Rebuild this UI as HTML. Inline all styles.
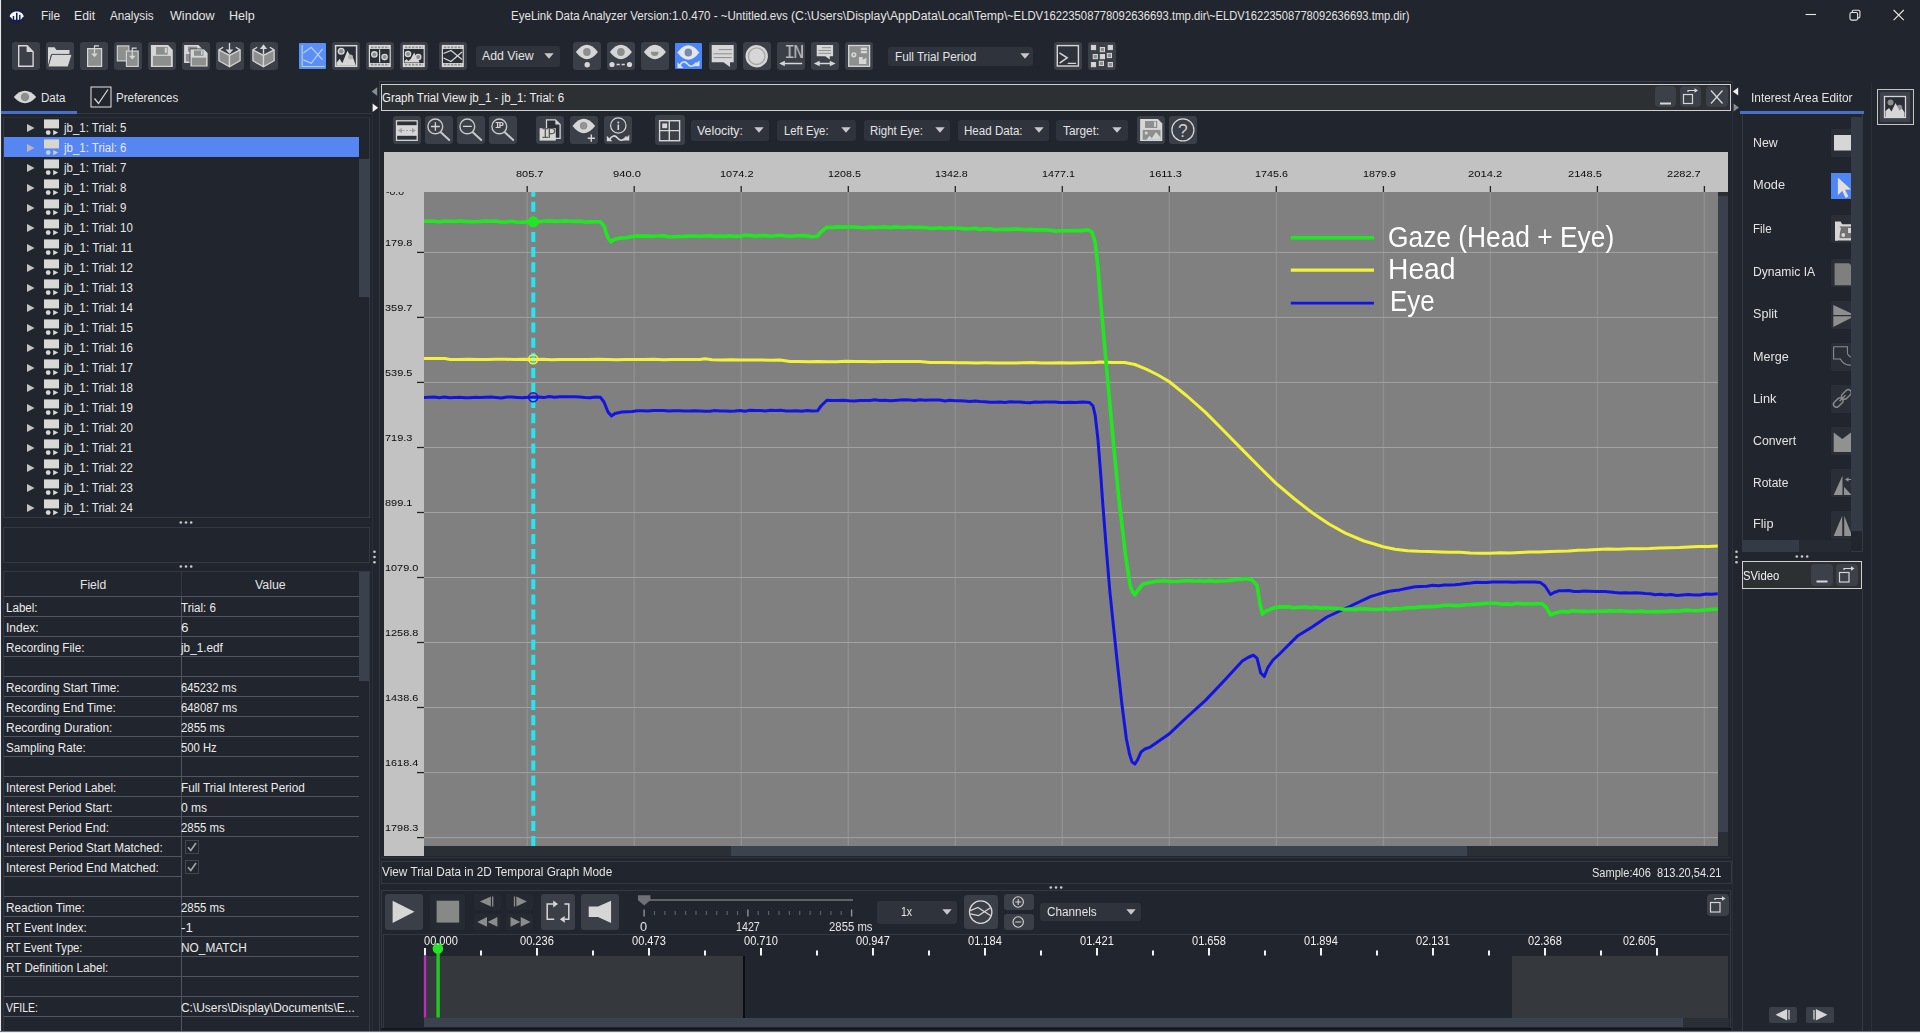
<!DOCTYPE html>
<html lang="en"><head><meta charset="utf-8"><title>EyeLink Data Analyzer</title>
<style>
html,body{margin:0;padding:0;}
body{width:1920px;height:1033px;overflow:hidden;background:#21252d;position:relative;font-family:"Liberation Sans",sans-serif;}
div{position:absolute;box-sizing:border-box;}
.t{position:absolute;white-space:nowrap;transform-origin:0 50%;display:block;}
svg{position:absolute;left:0;top:0;display:block;overflow:visible;}
.b svg{overflow:hidden;}
</style></head><body>
<div style="left:0px;top:0px;width:1px;height:1033px;background:#e4e6ea;"></div>
<div style="left:1px;top:0px;width:1px;height:1033px;background:#2c3039;"></div>
<svg style="left:8px;top:7.500px" width="17" height="16" viewBox="0 0 17 16"><ellipse cx="8.500" cy="8.200" rx="8" ry="7.400" fill="#161f52" opacity=".85"/><path d="M1.600 8.600C2.500 5 5.500 3.500 8.700 3.500S15 5 15.800 8.400L14.200 9.800L12.800 11.700H4.800L3.200 9.800Z" fill="#f6f7fb"/><rect x="8" y="4.800" width="1.500" height="7.200" fill="#101a4e"/><rect x="4.800" y="8" width="1.400" height="4" fill="#101a4e"/><rect x="11.100" y="6.800" width="1.400" height="5.200" fill="#101a4e"/></svg>
<span id="t1" class="t" style="left:40.65px;top:9.70px;font-size:12px;line-height:12px;color:#e4e4e4;transform:scaleX(0.9820);">File</span>
<span id="t2" class="t" style="left:74.43px;top:9.70px;font-size:12px;line-height:12px;color:#e4e4e4;transform:scaleX(1.0172);">Edit</span>
<span id="t3" class="t" style="left:110.46px;top:9.70px;font-size:12px;line-height:12px;color:#e4e4e4;transform:scaleX(0.9754);">Analysis</span>
<span id="t4" class="t" style="left:169.61px;top:9.70px;font-size:12px;line-height:12px;color:#e4e4e4;transform:scaleX(1.0467);">Window</span>
<span id="t5" class="t" style="left:229.41px;top:9.70px;font-size:12px;line-height:12px;color:#e4e4e4;transform:scaleX(1.0442);">Help</span>
<span id="t6" class="t" style="left:511.37px;top:10.30px;font-size:12px;line-height:12px;color:#e4e4e4;transform:scaleX(0.9615);">EyeLink Data Analyzer Version:1.0.470 - ~Untitled.evs</span>
<span id="t7" class="t" style="left:790.52px;top:10.30px;font-size:12px;line-height:12px;color:#e4e4e4;transform:scaleX(1.0233);">(C:\Users\Display\AppData\Local\Temp\</span>
<span id="t8" class="t" style="left:1006.88px;top:10.30px;font-size:12px;line-height:12px;color:#e4e4e4;transform:scaleX(0.9422);">~ELDV16223508778092636693.tmp.dir\</span>
<span id="t9" class="t" style="left:1209.39px;top:10.30px;font-size:12px;line-height:12px;color:#e4e4e4;transform:scaleX(0.9286);">~ELDV16223508778092636693.tmp.dir)</span>
<svg style="left:1800px;top:5px" width="110" height="20" viewBox="1800 5 110 20" fill="none" stroke="#e6e6e6" stroke-width="1.1"><path d="M1805.5 14.5H1816"/><rect x="1850" y="12.5" width="7.6" height="7.6" rx="1.5"/><path d="M1852.3 12.3V11.6a1.3 1.3 0 0 1 1.3-1.3h5a1.3 1.3 0 0 1 1.3 1.3v5a1.3 1.3 0 0 1-1.3 1.3h-0.8"/><path d="M1893.6 10l10.2 10.2M1903.8 10l-10.2 10.2"/></svg>
<div class="b" style="left:12px;top:42px;width:28px;height:28px;background:#3a3f48;border-radius:3px;overflow:hidden;"><svg width="28" height="28" viewBox="0 0 28 28"><path d="M6.700 3.800h8.500l5.900 6v14.500H6.700z" fill="#3a3f48" stroke="#d6d6d6" stroke-width="1.400"/><path d="M14.600 3.800v6.200h6.500z" fill="#d6d6d6"/></svg></div>
<div class="b" style="left:46px;top:42px;width:28px;height:28px;background:#3a3f48;border-radius:3px;overflow:hidden;"><svg width="28" height="28" viewBox="0 0 28 28"><path d="M2 5.300h6.500l2 2.700h13v4.500H5L2 24.900z" fill="#d6d6d6"/><path d="M5.700 12.400h20.300l-3.900 12.500H2z" fill="#d6d6d6" stroke="#3a3f48" stroke-width=".9"/></svg></div>
<div class="b" style="left:80px;top:42px;width:28px;height:28px;background:#3a3f48;border-radius:3px;overflow:hidden;"><svg width="28" height="28" viewBox="0 0 28 28"><rect x="7.600" y="6.600" width="14" height="17.800" fill="#8c8f8e" stroke="#d6d6d6" stroke-width="1.200"/><path d="M14.500 11.500V3.800h4.500" stroke="#d6d6d6" stroke-width="1.200" fill="none"/><path d="M11.300 11.400h6.400l-3.200 3.800z" fill="#d6d6d6"/></svg></div>
<div class="b" style="left:114px;top:42px;width:28px;height:28px;background:#3a3f48;border-radius:3px;overflow:hidden;"><svg width="28" height="28" viewBox="0 0 28 28"><rect x="3.300" y="3.900" width="11.600" height="15" fill="#8c8f8e" stroke="#d6d6d6" stroke-width="1.100"/><rect x="12.400" y="9" width="11.800" height="15.400" fill="#8c8f8e" stroke="#d6d6d6" stroke-width="1.100"/><path d="M18.300 14V6.200h4.400" stroke="#d6d6d6" stroke-width="1.200" fill="none"/><path d="M15 13.800h6.600l-3.300 3.700z" fill="#d6d6d6"/></svg></div>
<div class="b" style="left:148px;top:42px;width:28px;height:28px;background:#3a3f48;border-radius:3px;overflow:hidden;"><svg width="28" height="28" viewBox="0 0 28 28"><path d="M2.900 3h17.200l4.700 5v16.900H2.900z" fill="#d6d6d6"/><rect x="8" y="4.900" width="11.700" height="7.800" fill="#8c8f8e"/><rect x="16.800" y="5.700" width="2" height="5.100" fill="#d6d6d6"/><rect x="4.900" y="13.900" width="18" height="9.900" fill="#8c8f8e"/></svg></div>
<div class="b" style="left:182px;top:42px;width:28px;height:28px;background:#3a3f48;border-radius:3px;overflow:hidden;"><svg width="28" height="28" viewBox="0 0 28 28"><path d="M2.100 3h14.400l4 4.200V21H2.100z" fill="#d6d6d6"/><rect x="6" y="4.600" width="9" height="5" fill="#8c8f8e"/><rect x="3.800" y="12" width="6" height="7.500" fill="#8c8f8e"/><path d="M8 6.900h14l4 4.200v13.800H8z" fill="#d6d6d6" stroke="#3a3f48" stroke-width=".8"/><rect x="12" y="8.500" width="9.500" height="5.300" fill="#8c8f8e"/><rect x="19" y="9.100" width="1.500" height="3.600" fill="#d6d6d6"/><rect x="9.800" y="15.600" width="14.300" height="7.900" fill="#8c8f8e"/></svg></div>
<div class="b" style="left:216px;top:42px;width:28px;height:28px;background:#3a3f48;border-radius:3px;overflow:hidden;"><svg width="28" height="28" viewBox="0 0 28 28"><path d="M2.900 7.900L13.500 13.300v11.400L2.900 18.800z" fill="#8c8f8e" stroke="#d6d6d6" stroke-width="1.300" stroke-linejoin="round"/><path d="M24.100 7.900L13.500 13.300v11.400l10.600-5.900z" fill="#8c8f8e" stroke="#d6d6d6" stroke-width="1.300" stroke-linejoin="round"/><path d="M2.900 7.900l4.300-2.700M24.100 7.900l-4.300-2.700" stroke="#d6d6d6" stroke-width="1.300"/><path d="M13.500 1v8" stroke="#d6d6d6" stroke-width="1.300"/><path d="M9.700 7.500h7.600l-3.800 4.600z" fill="#d6d6d6"/></svg></div>
<div class="b" style="left:250px;top:42px;width:28px;height:28px;background:#3a3f48;border-radius:3px;overflow:hidden;"><svg width="28" height="28" viewBox="0 0 28 28"><path d="M2.900 7.900L13.500 13.300v11.400L2.900 18.800z" fill="#8c8f8e" stroke="#d6d6d6" stroke-width="1.300" stroke-linejoin="round"/><path d="M24.100 7.900L13.500 13.300v11.400l10.600-5.900z" fill="#8c8f8e" stroke="#d6d6d6" stroke-width="1.300" stroke-linejoin="round"/><path d="M2.900 7.900l4.300-2.700M24.100 7.900l-4.300-2.700" stroke="#d6d6d6" stroke-width="1.300"/><path d="M13.500 5.500v7" stroke="#d6d6d6" stroke-width="1.400"/><path d="M9.900 7h7.200l-3.600-4.800z" fill="#d6d6d6"/></svg></div>
<div class="b" style="left:298.5px;top:42.6px;width:27px;height:26.4px;background:#5a8ff8;border-radius:1px;overflow:hidden;"><svg width="27" height="26.4" viewBox="0 0 27 26.4"><path d="M3.200 2v21.500h22.500" fill="none" stroke="#b4ceff" stroke-width="1.200"/><path d="M4.400 10.100L12.200 4.300L23.500 16.800" fill="none" stroke="#b4ceff" stroke-width="1.300"/><path d="M4.400 16.800L12.200 20.300L23.500 5.900" fill="none" stroke="#b4ceff" stroke-width="1.300"/></svg></div>
<div class="b" style="left:332px;top:42px;width:28px;height:28px;background:#3a3f48;border-radius:3px;overflow:hidden;"><svg width="28" height="28" viewBox="0 0 28 28"><rect x="3.600" y="3.700" width="21" height="20.600" fill="#2a2e36" stroke="#d6d6d6" stroke-width="1.500"/><circle cx="9.200" cy="9.200" r="3.500" fill="#d6d6d6"/><circle cx="9.200" cy="9.200" r="2.200" fill="#8c8f8e"/><path d="M4.500 23.800v-3l3.200-4 2.600 4.500 5.100-12.500 3.500 6 2 .5 3 8.500z" fill="#d6d6d6"/><circle cx="18.500" cy="15.100" r="2.500" fill="#b0b2b1"/></svg></div>
<div class="b" style="left:366px;top:42px;width:28px;height:28px;background:#3a3f48;border-radius:3px;overflow:hidden;"><svg width="28" height="28" viewBox="0 0 28 28"><rect x="3.400" y="3.500" width="20.800" height="21" fill="#2a2e36" stroke="#d6d6d6" stroke-width="1.200"/><path d="M3.400 5.400h20.800M3.400 22.600h20.800" stroke="#d6d6d6" stroke-width="3.400"/><path d="M5 5.400h18M5 22.600h18" stroke="#8c8f8e" stroke-width="1.800" stroke-dasharray="2.300 1.200"/><path d="M13.600 7.500v13" stroke="#d6d6d6" stroke-width="1.200"/><circle cx="8.400" cy="12.400" r="3.300" fill="#d6d6d6"/><circle cx="8.400" cy="12.400" r="2" fill="#8c8f8e"/><circle cx="18.600" cy="15.100" r="3.300" fill="#d6d6d6"/><circle cx="18.600" cy="15.100" r="2" fill="#8c8f8e"/></svg></div>
<div class="b" style="left:400px;top:42px;width:28px;height:28px;background:#3a3f48;border-radius:3px;overflow:hidden;"><svg width="28" height="28" viewBox="0 0 28 28"><rect x="3.400" y="3.500" width="20.800" height="21" fill="#2a2e36" stroke="#d6d6d6" stroke-width="1.200"/><path d="M3.400 5.400h20.800M3.400 22.600h20.800" stroke="#d6d6d6" stroke-width="3.400"/><path d="M5 5.400h18M5 22.600h18" stroke="#8c8f8e" stroke-width="1.800" stroke-dasharray="2.300 1.200"/><circle cx="8" cy="12" r="3.300" fill="#d6d6d6"/><circle cx="8" cy="12" r="2" fill="#8c8f8e"/><path d="M4.500 20.400v-1.500l2-2 1.800 2 2.400-2 3.500-6.500 2.300 6 2 1.500 1 2.500z" fill="#d6d6d6"/><circle cx="18.200" cy="15.100" r="3.300" fill="#d6d6d6"/><circle cx="18.200" cy="15.100" r="2" fill="#8c8f8e"/></svg></div>
<div class="b" style="left:438.5px;top:42px;width:28px;height:28px;background:#3a3f48;border-radius:3px;overflow:hidden;"><svg width="28" height="28" viewBox="0 0 28 28"><rect x="3.400" y="3.500" width="20.800" height="21" fill="#2a2e36" stroke="#d6d6d6" stroke-width="1.200"/><path d="M3.400 5.400h20.800M3.400 22.600h20.800" stroke="#d6d6d6" stroke-width="3.400"/><path d="M5 5.400h18M5 22.600h18" stroke="#8c8f8e" stroke-width="1.800" stroke-dasharray="2.300 1.200"/><path d="M4.500 11.500L12 8.500L23 17.500M4.500 16L12 19.500L23 10" fill="none" stroke="#d6d6d6" stroke-width="1.200"/></svg></div>
<div style="left:476px;top:45.5px;width:84px;height:21px;background:#2e333c;border-radius:3px;"></div>
<svg style="left:543.5px;top:53.0px" width="10" height="6" viewBox="0 0 10 6"><path d="M0.3 0.3h9.4L5 5.8z" fill="#c8c8c8"/></svg>
<span id="t10" class="t" style="left:482.32px;top:50.40px;font-size:12px;line-height:12px;color:#e4e4e4;transform:scaleX(1.0231);">Add View</span>
<div class="b" style="left:573px;top:42px;width:28px;height:28px;background:#3a3f48;border-radius:3px;overflow:hidden;"><svg width="28" height="28" viewBox="0 0 28 28"><path d="M2.9000000000000004 10Q13.9 -4.5 24.9 10Q13.9 24.5 2.9000000000000004 10z" fill="#d6d6d6"/><ellipse cx="13.9" cy="10" rx="3.800" ry="4" fill="#8c8f8e"/><circle cx="14.200" cy="22.800" r="2.700" fill="#d6d6d6"/></svg></div>
<div class="b" style="left:607px;top:42px;width:28px;height:28px;background:#3a3f48;border-radius:3px;overflow:hidden;"><svg width="28" height="28" viewBox="0 0 28 28"><path d="M2.9000000000000004 10Q13.9 -4.5 24.9 10Q13.9 24.5 2.9000000000000004 10z" fill="#d6d6d6"/><ellipse cx="13.9" cy="10" rx="3.800" ry="4" fill="#8c8f8e"/><circle cx="5" cy="22.500" r="2.600" fill="#d6d6d6"/><circle cx="22.500" cy="22.500" r="2.600" fill="#d6d6d6"/><path d="M9.600 22.500h3.200M14.600 22.500h3.200" stroke="#d6d6d6" stroke-width="1.600"/></svg></div>
<div class="b" style="left:641px;top:42px;width:28px;height:28px;background:#3a3f48;border-radius:3px;overflow:hidden;"><svg width="28" height="28" viewBox="0 0 28 28"><path d="M2.900 10Q13.900 -4.500 24.900 10Q13.900 24.500 2.900 10z" fill="#d6d6d6"/><path d="M9.900 9.700h7.600a3.800 4.300 0 0 1-7.600 0z" fill="#8c8f8e"/></svg></div>
<div class="b" style="left:675.2px;top:42.6px;width:27.3px;height:26.6px;background:#4c86f6;border-radius:1px;overflow:hidden;"><svg width="27.3" height="26.6" viewBox="0 0 27.3 26.6"><path d="M2.3000000000000007 9.4Q13.3 -5.1 24.3 9.4Q13.3 23.9 2.3000000000000007 9.4z" fill="#dfe6f4"/><ellipse cx="13.3" cy="9.4" rx="3.800" ry="4" fill="#7f8aa2"/><path d="M4.500 23c2.500-5 5.500-5 8-2s5.500 3.500 9-1.500" fill="none" stroke="#d4e2ff" stroke-width="1.700"/><path d="M2.500 19.200v5.800h6z" fill="#d4e2ff"/><path d="M24.500 17.300v6h-6z" fill="#d4e2ff"/></svg></div>
<div class="b" style="left:709px;top:42px;width:28px;height:28px;background:#3a3f48;border-radius:3px;overflow:hidden;"><svg width="28" height="28" viewBox="0 0 28 28"><path d="M2.700 2.900h22v17.300h-3.700v4.700l-6.600-4.700H2.700z" fill="#d6d6d6"/><path d="M9.700 7.600h13.200M4.600 11.800h18.300M4.600 15.600h18.300" stroke="#8c8f8e" stroke-width="1"/></svg></div>
<div class="b" style="left:743px;top:42px;width:28px;height:28px;background:#3a3f48;border-radius:3px;overflow:hidden;"><svg width="28" height="28" viewBox="0 0 28 28"><circle cx="13.700" cy="14.200" r="11.200" fill="#d6d6d6"/><circle cx="13.700" cy="14.200" r="8.300" fill="none" stroke="#a4a6a5" stroke-width="1.300"/></svg></div>
<div class="b" style="left:777px;top:42px;width:28px;height:28px;background:#3a3f48;border-radius:3px;overflow:hidden;"><svg width="28" height="28" viewBox="0 0 28 28"><path d="M4.600 21.500h20.600" stroke="#d6d6d6" stroke-width="1.300"/><path d="M2.200 21.500l5.600-2.700v5.400z" fill="#d6d6d6"/></svg></div>
<div class="b" style="left:811px;top:42px;width:28px;height:28px;background:#3a3f48;border-radius:3px;overflow:hidden;"><svg width="28" height="28" viewBox="0 0 28 28"><path d="M5.700 2.900h16.400v11.300h-3.300v3.200l-4.600-3.200H5.700z" fill="#d6d6d6"/><path d="M11 5.700h9M7.500 8.500h12.500M7.500 11.300h12.500" stroke="#8c8f8e" stroke-width="1"/><path d="M6 21.500h15.500" stroke="#d6d6d6" stroke-width="1.400"/><path d="M2.900 21.500l5.800-2.800v5.600z" fill="#d6d6d6"/><path d="M24.600 21.500l-5.800-2.800v5.600z" fill="#d6d6d6"/></svg></div>
<div class="b" style="left:845px;top:42px;width:28px;height:28px;background:#3a3f48;border-radius:3px;overflow:hidden;"><svg width="28" height="28" viewBox="0 0 28 28"><rect x="3.700" y="3.500" width="20.900" height="20.800" fill="#8c8f8e" stroke="#d6d6d6" stroke-width="1.300"/><circle cx="8.800" cy="12.800" r="2.600" fill="#d6d6d6"/><circle cx="8.800" cy="12.800" r="1" fill="#8c8f8e"/><rect x="15.800" y="5.700" width="6.100" height="5.600" fill="#d6d6d6"/><path d="M15.800 8.500h6.100" stroke="#8c8f8e" stroke-width=".8"/><path d="M13.900 15.100h3.800v2.600l3.700-2v6.400h-7.500z" fill="#d6d6d6"/></svg></div>
<span class="t" style="left:784px;top:41.500px;font-size:21px;line-height:21px;color:#b9babb;font-family:'Liberation Mono',monospace;letter-spacing:-2.600px;transform:scaleX(0.9);will-change:transform">IN</span>
<div style="left:888px;top:46.5px;width:145px;height:19px;background:#2e333c;border-radius:3px;"></div>
<svg style="left:1020px;top:53.0px" width="10" height="6" viewBox="0 0 10 6"><path d="M0.3 0.3h9.4L5 5.8z" fill="#c8c8c8"/></svg>
<span id="t11" class="t" style="left:894.66px;top:50.80px;font-size:12px;line-height:12px;color:#e4e4e4;transform:scaleX(0.9750);">Full Trial Period</span>
<div class="b" style="left:1054px;top:42px;width:28px;height:28px;background:#3a3f48;border-radius:3px;overflow:hidden;"><svg width="28" height="28" viewBox="0 0 28 28"><rect x="3.300" y="3.600" width="21.100" height="20.400" fill="#2e323a" stroke="#d6d6d6" stroke-width="1.400"/><path d="M5.400 10.900l7.800 4.900-7.600 5.400" fill="none" stroke="#d6d6d6" stroke-width="1.500"/><path d="M13.700 21.400h8.400" stroke="#d6d6d6" stroke-width="1.300"/></svg></div>
<div class="b" style="left:1088px;top:42px;width:28px;height:28px;background:#3a3f48;border-radius:3px;overflow:hidden;"><svg width="28" height="28" viewBox="0 0 28 28"><rect x="3.4" y="3.4" width="4.200" height="4.200" fill="#d6d6d6" stroke="#d6d6d6" stroke-width="1"/><rect x="12.3" y="5.5" width="4.200" height="4.200" fill="#8c8f8e" stroke="#d6d6d6" stroke-width="1"/><rect x="20.2" y="3.4" width="4.200" height="4.200" fill="#d6d6d6" stroke="#d6d6d6" stroke-width="1"/><rect x="5.2" y="12.5" width="4.200" height="4.200" fill="#8c8f8e" stroke="#d6d6d6" stroke-width="1"/><rect x="12.3" y="12.5" width="4.200" height="4.200" fill="#d6d6d6" stroke="#d6d6d6" stroke-width="1"/><rect x="19.3" y="11.4" width="4.200" height="4.200" fill="#8c8f8e" stroke="#d6d6d6" stroke-width="1"/><rect x="3.4" y="20.5" width="4.200" height="4.200" fill="#d6d6d6" stroke="#d6d6d6" stroke-width="1"/><rect x="11.3" y="19.3" width="4.200" height="4.200" fill="#8c8f8e" stroke="#d6d6d6" stroke-width="1"/><rect x="20.2" y="20.5" width="4.200" height="4.200" fill="#8c8f8e" stroke="#d6d6d6" stroke-width="1"/></svg></div>
<svg style="left:13px;top:89px" width="24" height="16" viewBox="0 0 24 16"><path d="M0.800 8Q12 -4.500 23.200 8Q12 20.500 0.800 8z" fill="#d6d6d6"/><circle cx="12" cy="8" r="4.200" fill="#8c8f8e"/></svg>
<span id="t12" class="t" style="left:40.56px;top:92.20px;font-size:12px;line-height:12px;color:#e4e4e4;transform:scaleX(0.9651);">Data</span>
<svg style="left:90px;top:86px" width="22" height="22" viewBox="0 0 22 22"><rect x="1" y="1" width="20" height="20" fill="none" stroke="#d6d6d6" stroke-width="1.100"/><path d="M4.500 12.500l4 5L18 3.500" fill="none" stroke="#d6d6d6" stroke-width="1.300"/></svg>
<span id="t13" class="t" style="left:116.27px;top:92.20px;font-size:12px;line-height:12px;color:#e4e4e4;transform:scaleX(0.9608);">Preferences</span>
<div style="left:77px;top:113px;width:295px;height:1px;background:#343941;"></div>
<div style="left:1px;top:111px;width:76px;height:3px;background:#4a6fc6;"></div>
<svg style="left:371px;top:86px" width="8" height="27" viewBox="371 86 8 27"><path d="M377.200 87.300v8.400l-5.600-4.200z" fill="#8a8d90"/><path d="M372.600 103.500v8.400l5.600-4.200z" fill="#f0f0f0"/></svg>
<div style="left:3px;top:117px;width:367px;height:401px;border:1px solid #343941;border-top-color:#2b3038;"></div>
<div style="left:4px;top:137px;width:355px;height:20px;background:#5586f2;"></div>
<div style="left:359px;top:159px;width:10.5px;height:138px;background:#3b404d;"></div>
<svg style="left:0;top:117px" width="70" height="20" viewBox="0 117 70 20"><path d="M0 0.500l7.500 4L0 8.500z" transform="translate(27 123.500)" fill="#c4c4c4"/><rect x="44" y="119.400" width="15" height="9" fill="#d8d8d4"/><circle cx="48.200" cy="132.600" r="2.400" fill="#d8d8d4"/><path d="M53.200 130l5 2.600-5 2.600z" fill="#d8d8d4"/></svg>
<span id="t14" class="t" style="left:63.77px;top:121.50px;font-size:12px;line-height:12px;color:#e8e8e8;transform:scaleX(0.9554);">jb_1: Trial: 5</span>
<svg style="left:0;top:137px" width="70" height="20" viewBox="0 117 70 20"><path d="M0 0.500l7.500 4L0 8.500z" transform="translate(27 123.500)" fill="#bfb3b6"/><rect x="44" y="119.400" width="15" height="9" fill="#d9d6cc"/><circle cx="48.200" cy="132.600" r="2.400" fill="#b9cff7"/><path d="M53.200 130l5 2.600-5 2.600z" fill="#b9cff7"/></svg>
<span id="t15" class="t" style="left:63.77px;top:141.50px;font-size:12px;line-height:12px;color:#e8e8e8;transform:scaleX(0.9554);">jb_1: Trial: 6</span>
<svg style="left:0;top:157px" width="70" height="20" viewBox="0 117 70 20"><path d="M0 0.500l7.500 4L0 8.500z" transform="translate(27 123.500)" fill="#c4c4c4"/><rect x="44" y="119.400" width="15" height="9" fill="#d8d8d4"/><circle cx="48.200" cy="132.600" r="2.400" fill="#d8d8d4"/><path d="M53.200 130l5 2.600-5 2.600z" fill="#d8d8d4"/></svg>
<span id="t16" class="t" style="left:63.77px;top:161.50px;font-size:12px;line-height:12px;color:#e8e8e8;transform:scaleX(0.9554);">jb_1: Trial: 7</span>
<svg style="left:0;top:177px" width="70" height="20" viewBox="0 117 70 20"><path d="M0 0.500l7.500 4L0 8.500z" transform="translate(27 123.500)" fill="#c4c4c4"/><rect x="44" y="119.400" width="15" height="9" fill="#d8d8d4"/><circle cx="48.200" cy="132.600" r="2.400" fill="#d8d8d4"/><path d="M53.200 130l5 2.600-5 2.600z" fill="#d8d8d4"/></svg>
<span id="t17" class="t" style="left:63.77px;top:181.50px;font-size:12px;line-height:12px;color:#e8e8e8;transform:scaleX(0.9554);">jb_1: Trial: 8</span>
<svg style="left:0;top:197px" width="70" height="20" viewBox="0 117 70 20"><path d="M0 0.500l7.500 4L0 8.500z" transform="translate(27 123.500)" fill="#c4c4c4"/><rect x="44" y="119.400" width="15" height="9" fill="#d8d8d4"/><circle cx="48.200" cy="132.600" r="2.400" fill="#d8d8d4"/><path d="M53.200 130l5 2.600-5 2.600z" fill="#d8d8d4"/></svg>
<span id="t18" class="t" style="left:63.77px;top:201.50px;font-size:12px;line-height:12px;color:#e8e8e8;transform:scaleX(0.9554);">jb_1: Trial: 9</span>
<svg style="left:0;top:217px" width="70" height="20" viewBox="0 117 70 20"><path d="M0 0.500l7.500 4L0 8.500z" transform="translate(27 123.500)" fill="#c4c4c4"/><rect x="44" y="119.400" width="15" height="9" fill="#d8d8d4"/><circle cx="48.200" cy="132.600" r="2.400" fill="#d8d8d4"/><path d="M53.200 130l5 2.600-5 2.600z" fill="#d8d8d4"/></svg>
<span id="t19" class="t" style="left:63.77px;top:221.50px;font-size:12px;line-height:12px;color:#e8e8e8;transform:scaleX(0.9558);">jb_1: Trial: 10</span>
<svg style="left:0;top:237px" width="70" height="20" viewBox="0 117 70 20"><path d="M0 0.500l7.500 4L0 8.500z" transform="translate(27 123.500)" fill="#c4c4c4"/><rect x="44" y="119.400" width="15" height="9" fill="#d8d8d4"/><circle cx="48.200" cy="132.600" r="2.400" fill="#d8d8d4"/><path d="M53.200 130l5 2.600-5 2.600z" fill="#d8d8d4"/></svg>
<span id="t20" class="t" style="left:63.76px;top:241.50px;font-size:12px;line-height:12px;color:#e8e8e8;transform:scaleX(0.9680);">jb_1: Trial: 11</span>
<svg style="left:0;top:257px" width="70" height="20" viewBox="0 117 70 20"><path d="M0 0.500l7.500 4L0 8.500z" transform="translate(27 123.500)" fill="#c4c4c4"/><rect x="44" y="119.400" width="15" height="9" fill="#d8d8d4"/><circle cx="48.200" cy="132.600" r="2.400" fill="#d8d8d4"/><path d="M53.200 130l5 2.600-5 2.600z" fill="#d8d8d4"/></svg>
<span id="t21" class="t" style="left:63.77px;top:261.50px;font-size:12px;line-height:12px;color:#e8e8e8;transform:scaleX(0.9558);">jb_1: Trial: 12</span>
<svg style="left:0;top:277px" width="70" height="20" viewBox="0 117 70 20"><path d="M0 0.500l7.500 4L0 8.500z" transform="translate(27 123.500)" fill="#c4c4c4"/><rect x="44" y="119.400" width="15" height="9" fill="#d8d8d4"/><circle cx="48.200" cy="132.600" r="2.400" fill="#d8d8d4"/><path d="M53.200 130l5 2.600-5 2.600z" fill="#d8d8d4"/></svg>
<span id="t22" class="t" style="left:63.77px;top:281.50px;font-size:12px;line-height:12px;color:#e8e8e8;transform:scaleX(0.9558);">jb_1: Trial: 13</span>
<svg style="left:0;top:297px" width="70" height="20" viewBox="0 117 70 20"><path d="M0 0.500l7.500 4L0 8.500z" transform="translate(27 123.500)" fill="#c4c4c4"/><rect x="44" y="119.400" width="15" height="9" fill="#d8d8d4"/><circle cx="48.200" cy="132.600" r="2.400" fill="#d8d8d4"/><path d="M53.200 130l5 2.600-5 2.600z" fill="#d8d8d4"/></svg>
<span id="t23" class="t" style="left:63.77px;top:301.50px;font-size:12px;line-height:12px;color:#e8e8e8;transform:scaleX(0.9558);">jb_1: Trial: 14</span>
<svg style="left:0;top:317px" width="70" height="20" viewBox="0 117 70 20"><path d="M0 0.500l7.500 4L0 8.500z" transform="translate(27 123.500)" fill="#c4c4c4"/><rect x="44" y="119.400" width="15" height="9" fill="#d8d8d4"/><circle cx="48.200" cy="132.600" r="2.400" fill="#d8d8d4"/><path d="M53.200 130l5 2.600-5 2.600z" fill="#d8d8d4"/></svg>
<span id="t24" class="t" style="left:63.77px;top:321.50px;font-size:12px;line-height:12px;color:#e8e8e8;transform:scaleX(0.9558);">jb_1: Trial: 15</span>
<svg style="left:0;top:337px" width="70" height="20" viewBox="0 117 70 20"><path d="M0 0.500l7.500 4L0 8.500z" transform="translate(27 123.500)" fill="#c4c4c4"/><rect x="44" y="119.400" width="15" height="9" fill="#d8d8d4"/><circle cx="48.200" cy="132.600" r="2.400" fill="#d8d8d4"/><path d="M53.200 130l5 2.600-5 2.600z" fill="#d8d8d4"/></svg>
<span id="t25" class="t" style="left:63.77px;top:341.50px;font-size:12px;line-height:12px;color:#e8e8e8;transform:scaleX(0.9558);">jb_1: Trial: 16</span>
<svg style="left:0;top:357px" width="70" height="20" viewBox="0 117 70 20"><path d="M0 0.500l7.500 4L0 8.500z" transform="translate(27 123.500)" fill="#c4c4c4"/><rect x="44" y="119.400" width="15" height="9" fill="#d8d8d4"/><circle cx="48.200" cy="132.600" r="2.400" fill="#d8d8d4"/><path d="M53.200 130l5 2.600-5 2.600z" fill="#d8d8d4"/></svg>
<span id="t26" class="t" style="left:63.77px;top:361.50px;font-size:12px;line-height:12px;color:#e8e8e8;transform:scaleX(0.9558);">jb_1: Trial: 17</span>
<svg style="left:0;top:377px" width="70" height="20" viewBox="0 117 70 20"><path d="M0 0.500l7.500 4L0 8.500z" transform="translate(27 123.500)" fill="#c4c4c4"/><rect x="44" y="119.400" width="15" height="9" fill="#d8d8d4"/><circle cx="48.200" cy="132.600" r="2.400" fill="#d8d8d4"/><path d="M53.200 130l5 2.600-5 2.600z" fill="#d8d8d4"/></svg>
<span id="t27" class="t" style="left:63.77px;top:381.50px;font-size:12px;line-height:12px;color:#e8e8e8;transform:scaleX(0.9558);">jb_1: Trial: 18</span>
<svg style="left:0;top:397px" width="70" height="20" viewBox="0 117 70 20"><path d="M0 0.500l7.500 4L0 8.500z" transform="translate(27 123.500)" fill="#c4c4c4"/><rect x="44" y="119.400" width="15" height="9" fill="#d8d8d4"/><circle cx="48.200" cy="132.600" r="2.400" fill="#d8d8d4"/><path d="M53.200 130l5 2.600-5 2.600z" fill="#d8d8d4"/></svg>
<span id="t28" class="t" style="left:63.77px;top:401.50px;font-size:12px;line-height:12px;color:#e8e8e8;transform:scaleX(0.9558);">jb_1: Trial: 19</span>
<svg style="left:0;top:417px" width="70" height="20" viewBox="0 117 70 20"><path d="M0 0.500l7.500 4L0 8.500z" transform="translate(27 123.500)" fill="#c4c4c4"/><rect x="44" y="119.400" width="15" height="9" fill="#d8d8d4"/><circle cx="48.200" cy="132.600" r="2.400" fill="#d8d8d4"/><path d="M53.200 130l5 2.600-5 2.600z" fill="#d8d8d4"/></svg>
<span id="t29" class="t" style="left:63.77px;top:421.50px;font-size:12px;line-height:12px;color:#e8e8e8;transform:scaleX(0.9558);">jb_1: Trial: 20</span>
<svg style="left:0;top:437px" width="70" height="20" viewBox="0 117 70 20"><path d="M0 0.500l7.500 4L0 8.500z" transform="translate(27 123.500)" fill="#c4c4c4"/><rect x="44" y="119.400" width="15" height="9" fill="#d8d8d4"/><circle cx="48.200" cy="132.600" r="2.400" fill="#d8d8d4"/><path d="M53.200 130l5 2.600-5 2.600z" fill="#d8d8d4"/></svg>
<span id="t30" class="t" style="left:63.77px;top:441.50px;font-size:12px;line-height:12px;color:#e8e8e8;transform:scaleX(0.9558);">jb_1: Trial: 21</span>
<svg style="left:0;top:457px" width="70" height="20" viewBox="0 117 70 20"><path d="M0 0.500l7.500 4L0 8.500z" transform="translate(27 123.500)" fill="#c4c4c4"/><rect x="44" y="119.400" width="15" height="9" fill="#d8d8d4"/><circle cx="48.200" cy="132.600" r="2.400" fill="#d8d8d4"/><path d="M53.200 130l5 2.600-5 2.600z" fill="#d8d8d4"/></svg>
<span id="t31" class="t" style="left:63.77px;top:461.50px;font-size:12px;line-height:12px;color:#e8e8e8;transform:scaleX(0.9558);">jb_1: Trial: 22</span>
<svg style="left:0;top:477px" width="70" height="20" viewBox="0 117 70 20"><path d="M0 0.500l7.500 4L0 8.500z" transform="translate(27 123.500)" fill="#c4c4c4"/><rect x="44" y="119.400" width="15" height="9" fill="#d8d8d4"/><circle cx="48.200" cy="132.600" r="2.400" fill="#d8d8d4"/><path d="M53.200 130l5 2.600-5 2.600z" fill="#d8d8d4"/></svg>
<span id="t32" class="t" style="left:63.77px;top:481.50px;font-size:12px;line-height:12px;color:#e8e8e8;transform:scaleX(0.9558);">jb_1: Trial: 23</span>
<svg style="left:0;top:497px" width="70" height="20" viewBox="0 117 70 20"><path d="M0 0.500l7.500 4L0 8.500z" transform="translate(27 123.500)" fill="#c4c4c4"/><rect x="44" y="119.400" width="15" height="9" fill="#d8d8d4"/><circle cx="48.200" cy="132.600" r="2.400" fill="#d8d8d4"/><path d="M53.200 130l5 2.600-5 2.600z" fill="#d8d8d4"/></svg>
<span id="t33" class="t" style="left:63.77px;top:501.50px;font-size:12px;line-height:12px;color:#e8e8e8;transform:scaleX(0.9558);">jb_1: Trial: 24</span>
<svg style="left:179.4px;top:521.1px" width="14" height="3" viewBox="0 0 14 3"><circle cx="1.800" cy="1.500" r="1.300" fill="#c8c8c8"/><circle cx="7" cy="1.500" r="1.300" fill="#c8c8c8"/><circle cx="12.200" cy="1.500" r="1.300" fill="#c8c8c8"/></svg>
<div style="left:3px;top:527px;width:367px;height:35.5px;border:1px solid #343941;"></div>
<svg style="left:179.4px;top:565.2px" width="14" height="3" viewBox="0 0 14 3"><circle cx="1.800" cy="1.500" r="1.300" fill="#c8c8c8"/><circle cx="7" cy="1.500" r="1.300" fill="#c8c8c8"/><circle cx="12.200" cy="1.500" r="1.300" fill="#c8c8c8"/></svg>
<svg style="left:373.4px;top:549.7px" width="3" height="14" viewBox="0 0 3 14"><circle cy="1.800" cx="1.500" r="1.300" fill="#c8c8c8"/><circle cy="7" cx="1.500" r="1.300" fill="#c8c8c8"/><circle cy="12.200" cx="1.500" r="1.300" fill="#c8c8c8"/></svg>
<div style="left:3px;top:571px;width:367px;height:460px;border:1px solid #343941;border-bottom:none;"></div>
<div style="left:359px;top:572px;width:10px;height:108.5px;background:#3b404d;"></div>
<span id="t34" class="t" style="left:80.23px;top:578.60px;font-size:12px;line-height:12px;color:#e4e4e4;transform:scaleX(1.0123);">Field</span>
<span id="t35" class="t" style="left:254.92px;top:578.60px;font-size:12px;line-height:12px;color:#e4e4e4;transform:scaleX(1.0319);">Value</span>
<div style="left:180.5px;top:572px;width:1px;height:24px;background:#343941;"></div>
<div style="left:4px;top:596px;width:355px;height:1px;background:#50555f;"></div>
<div style="left:180.5px;top:597px;width:1px;height:434px;background:#50555f;"></div>
<div style="left:4px;top:616px;width:355px;height:1px;background:#50555f;"></div>
<span id="t36" class="t" style="left:6.36px;top:601.60px;font-size:12px;line-height:12px;color:#ececec;transform:scaleX(0.9655);">Label:</span>
<span id="t37" class="t" style="left:181.46px;top:601.60px;font-size:12px;line-height:12px;color:#ececec;transform:scaleX(0.9652);">Trial: 6</span>
<div style="left:4px;top:636px;width:355px;height:1px;background:#50555f;"></div>
<span id="t38" class="t" style="left:6.34px;top:621.60px;font-size:12px;line-height:12px;color:#ececec;transform:scaleX(0.9974);">Index:</span>
<span id="t39" class="t" style="left:181.36px;top:621.60px;font-size:12px;line-height:12px;color:#ececec;transform:scaleX(1.1178);">6</span>
<div style="left:4px;top:656px;width:355px;height:1px;background:#50555f;"></div>
<span id="t40" class="t" style="left:6.36px;top:641.60px;font-size:12px;line-height:12px;color:#ececec;transform:scaleX(0.9712);">Recording File:</span>
<span id="t41" class="t" style="left:181.45px;top:641.60px;font-size:12px;line-height:12px;color:#ececec;transform:scaleX(0.9787);">jb_1.edf</span>
<div style="left:4px;top:676px;width:355px;height:1px;background:#50555f;"></div>
<div style="left:4px;top:696px;width:355px;height:1px;background:#50555f;"></div>
<span id="t42" class="t" style="left:6.35px;top:681.60px;font-size:12px;line-height:12px;color:#ececec;transform:scaleX(0.9788);">Recording Start Time:</span>
<span id="t43" class="t" style="left:181.48px;top:681.60px;font-size:12px;line-height:12px;color:#ececec;transform:scaleX(0.9353);">645232 ms</span>
<div style="left:4px;top:716px;width:355px;height:1px;background:#50555f;"></div>
<span id="t44" class="t" style="left:6.35px;top:701.60px;font-size:12px;line-height:12px;color:#ececec;transform:scaleX(0.9788);">Recording End Time:</span>
<span id="t45" class="t" style="left:181.48px;top:701.60px;font-size:12px;line-height:12px;color:#ececec;transform:scaleX(0.9439);">648087 ms</span>
<div style="left:4px;top:736px;width:355px;height:1px;background:#50555f;"></div>
<span id="t46" class="t" style="left:6.34px;top:721.60px;font-size:12px;line-height:12px;color:#ececec;transform:scaleX(0.9970);">Recording Duration:</span>
<span id="t47" class="t" style="left:181.47px;top:721.60px;font-size:12px;line-height:12px;color:#ececec;transform:scaleX(0.9505);">2855 ms</span>
<div style="left:4px;top:756px;width:355px;height:1px;background:#50555f;"></div>
<span id="t48" class="t" style="left:6.36px;top:741.60px;font-size:12px;line-height:12px;color:#ececec;transform:scaleX(0.9712);">Sampling Rate:</span>
<span id="t49" class="t" style="left:181.48px;top:741.60px;font-size:12px;line-height:12px;color:#ececec;transform:scaleX(0.9398);">500 Hz</span>
<div style="left:4px;top:776px;width:355px;height:1px;background:#50555f;"></div>
<div style="left:4px;top:796px;width:355px;height:1px;background:#50555f;"></div>
<span id="t50" class="t" style="left:6.36px;top:781.60px;font-size:12px;line-height:12px;color:#ececec;transform:scaleX(0.9667);">Interest Period Label:</span>
<span id="t51" class="t" style="left:181.46px;top:781.60px;font-size:12px;line-height:12px;color:#ececec;transform:scaleX(0.9761);">Full Trial Interest Period</span>
<div style="left:4px;top:816px;width:355px;height:1px;background:#50555f;"></div>
<span id="t52" class="t" style="left:6.36px;top:801.60px;font-size:12px;line-height:12px;color:#ececec;transform:scaleX(0.9665);">Interest Period Start:</span>
<span id="t53" class="t" style="left:181.44px;top:801.60px;font-size:12px;line-height:12px;color:#ececec;transform:scaleX(1.0042);">0 ms</span>
<div style="left:4px;top:836px;width:355px;height:1px;background:#50555f;"></div>
<span id="t54" class="t" style="left:6.36px;top:821.60px;font-size:12px;line-height:12px;color:#ececec;transform:scaleX(0.9700);">Interest Period End:</span>
<span id="t55" class="t" style="left:181.47px;top:821.60px;font-size:12px;line-height:12px;color:#ececec;transform:scaleX(0.9505);">2855 ms</span>
<div style="left:4px;top:856px;width:177px;height:1px;background:#50555f;"></div>
<span id="t56" class="t" style="left:6.35px;top:841.60px;font-size:12px;line-height:12px;color:#ececec;transform:scaleX(0.9829);">Interest Period Start Matched:</span>
<svg style="left:185px;top:839.9px" width="14" height="14" viewBox="0 0 14 14"><rect x="0.500" y="0.500" width="13" height="13" fill="none" stroke="#40454e"/><path d="M3 7.200l2.800 3.300L11 3" fill="none" stroke="#a4a6a8" stroke-width="1.600"/></svg>
<div style="left:4px;top:876px;width:177px;height:1px;background:#50555f;"></div>
<span id="t57" class="t" style="left:6.35px;top:861.60px;font-size:12px;line-height:12px;color:#ececec;transform:scaleX(0.9838);">Interest Period End Matched:</span>
<svg style="left:185px;top:859.9px" width="14" height="14" viewBox="0 0 14 14"><rect x="0.500" y="0.500" width="13" height="13" fill="none" stroke="#40454e"/><path d="M3 7.200l2.800 3.300L11 3" fill="none" stroke="#a4a6a8" stroke-width="1.600"/></svg>
<div style="left:4px;top:896px;width:355px;height:1px;background:#50555f;"></div>
<div style="left:4px;top:916px;width:355px;height:1px;background:#50555f;"></div>
<span id="t58" class="t" style="left:6.35px;top:901.60px;font-size:12px;line-height:12px;color:#ececec;transform:scaleX(0.9831);">Reaction Time:</span>
<span id="t59" class="t" style="left:181.47px;top:901.60px;font-size:12px;line-height:12px;color:#ececec;transform:scaleX(0.9505);">2855 ms</span>
<div style="left:4px;top:936px;width:355px;height:1px;background:#50555f;"></div>
<span id="t60" class="t" style="left:6.38px;top:921.60px;font-size:12px;line-height:12px;color:#ececec;transform:scaleX(0.9420);">RT Event Index:</span>
<span id="t61" class="t" style="left:181.37px;top:921.60px;font-size:12px;line-height:12px;color:#ececec;transform:scaleX(1.1014);">-1</span>
<div style="left:4px;top:956px;width:355px;height:1px;background:#50555f;"></div>
<span id="t62" class="t" style="left:6.39px;top:941.60px;font-size:12px;line-height:12px;color:#ececec;transform:scaleX(0.9314);">RT Event Type:</span>
<span id="t63" class="t" style="left:181.45px;top:941.60px;font-size:12px;line-height:12px;color:#ececec;transform:scaleX(0.9887);">NO_MATCH</span>
<div style="left:4px;top:976px;width:355px;height:1px;background:#50555f;"></div>
<span id="t64" class="t" style="left:6.36px;top:961.60px;font-size:12px;line-height:12px;color:#ececec;transform:scaleX(0.9746);">RT Definition Label:</span>
<div style="left:4px;top:996px;width:355px;height:1px;background:#50555f;"></div>
<div style="left:4px;top:1016px;width:355px;height:1px;background:#50555f;"></div>
<span id="t65" class="t" style="left:6.43px;top:1001.60px;font-size:12px;line-height:12px;color:#ececec;transform:scaleX(0.8680);">VFILE:</span>
<span id="t66" class="t" style="left:181.44px;top:1001.60px;font-size:12px;line-height:12px;color:#ececec;transform:scaleX(0.9942);">C:\Users\Display\Documents\E...</span>
<div style="left:372px;top:114px;width:1px;height:917px;background:#2a2f37;"></div>
<div style="left:379px;top:81px;width:1px;height:950px;background:#343941;"></div>
<div style="left:379px;top:81px;width:1354px;height:1px;background:#3a3f48;"></div>
<div style="left:1732px;top:81px;width:1px;height:950px;background:#2b3038;"></div>
<div style="left:381px;top:83.5px;width:1350px;height:27.5px;background:#2d3032;border:1px solid #cfcfcf;"></div>
<span id="t67" class="t" style="left:381.87px;top:92.00px;font-size:12px;line-height:12px;color:#f0f0f0;transform:scaleX(0.9555);">Graph Trial View jb_1 - jb_1: Trial: 6</span>
<div class="b" style="left:1654.5px;top:86px;width:21px;height:21px;background:#3b4049;border-radius:4px;overflow:hidden;"><svg width="21" height="21" viewBox="0 0 21 21"><path d="M5 17.500h11" stroke="#d6d6d6" stroke-width="1.800"/></svg></div>
<div class="b" style="left:1680px;top:86px;width:21px;height:21px;background:#3b4049;border-radius:4px;overflow:hidden;"><svg width="21" height="21" viewBox="0 0 21 21"><rect x="3.500" y="8.500" width="9" height="9" fill="none" stroke="#d6d6d6" stroke-width="1.200"/><path d="M8 6V4.500h7.500" fill="none" stroke="#d6d6d6" stroke-width="1.200"/><path d="M14.500 2.200l3.500 2.300-3.500 2.300z" fill="#d6d6d6"/></svg></div>
<div class="b" style="left:1705.5px;top:86px;width:22px;height:21px;background:#3b4049;border-radius:4px;overflow:hidden;"><svg width="22" height="21" viewBox="0 0 22 21"><path d="M5 4.500l11.500 13M16.500 4.500L5 17.500" stroke="#d6d6d6" stroke-width="1.300"/></svg></div>
<div class="b" style="left:393px;top:116px;width:28px;height:28px;background:#3a3f48;border-radius:3px;overflow:hidden;"><svg width="28" height="28" viewBox="0 0 28 28"><rect x="3.500" y="4.800" width="20.700" height="19.500" fill="#2a2e36" stroke="#d6d6d6" stroke-width="1.300"/><rect x="3.500" y="9.200" width="20.700" height="10.600" fill="#d6d6d6"/><path d="M8 14.500h3.500M13 14.500h2M16.500 14.500h3.500" stroke="#9ea09f" stroke-width="1.200"/><path d="M4.900 14.500l3.900-2.700v5.400zM22.900 14.500l-3.900-2.700v5.400z" fill="#9ea09f"/></svg></div>
<div class="b" style="left:424.7px;top:116px;width:28px;height:28px;background:#3a3f48;border-radius:3px;overflow:hidden;"><svg width="28" height="28" viewBox="0 0 28 28"><circle cx="10.300" cy="10.400" r="7.400" fill="none" stroke="#c6c7c8" stroke-width="1.400"/><path d="M15.800 16.200l8.400 7.900" stroke="#c6c7c8" stroke-width="2" stroke-linecap="round"/><path d="M6 10.500h8.800M10.400 6.300v8.500" stroke="#d6d6d6" stroke-width="1.300"/></svg></div>
<div class="b" style="left:456.7px;top:116px;width:28px;height:28px;background:#3a3f48;border-radius:3px;overflow:hidden;"><svg width="28" height="28" viewBox="0 0 28 28"><circle cx="10.300" cy="10.400" r="7.400" fill="none" stroke="#c6c7c8" stroke-width="1.400"/><path d="M15.800 16.200l8.400 7.900" stroke="#c6c7c8" stroke-width="2" stroke-linecap="round"/><path d="M6 10.300h8.800" stroke="#d6d6d6" stroke-width="1.300"/></svg></div>
<div class="b" style="left:488.7px;top:116px;width:28px;height:28px;background:#3a3f48;border-radius:3px;overflow:hidden;"><svg width="28" height="28" viewBox="0 0 28 28"><circle cx="10.300" cy="10.400" r="7.400" fill="none" stroke="#c6c7c8" stroke-width="1.400"/><path d="M15.800 16.200l8.400 7.900" stroke="#c6c7c8" stroke-width="2" stroke-linecap="round"/></svg></div>
<div class="b" style="left:536.3px;top:116px;width:28px;height:28px;background:#3a3f48;border-radius:3px;overflow:hidden;"><svg width="28" height="28" viewBox="0 0 28 28"><path d="M10.500 3.800h8.900l4.700 4.600v14h-13.600z" fill="#2a2e36" stroke="#d6d6d6" stroke-width="1.300"/><path d="M19.400 3.800v4.600h4.700z" fill="#d6d6d6"/><rect x="3.600" y="12.200" width="16.200" height="12.400" fill="#d6d6d6"/></svg></div>
<div class="b" style="left:570px;top:116px;width:28px;height:28px;background:#3a3f48;border-radius:3px;overflow:hidden;"><svg width="28" height="28" viewBox="0 0 28 28"><path d="M2.500 10Q13.800 -4.500 25.100 10Q13.800 24.500 2.500 10z" fill="#d6d6d6"/><circle cx="13.600" cy="9.800" r="3.700" fill="#8c8f8e"/><circle cx="13.600" cy="9.800" r="1.700" fill="none" stroke="#a7a9a8" stroke-width=".7"/><path d="M17.700 22.200h7.200M21.300 18.600v7.200" stroke="#d6d6d6" stroke-width="1.400"/></svg></div>
<div class="b" style="left:603.8px;top:116px;width:28px;height:28px;background:#3a3f48;border-radius:3px;overflow:hidden;"><svg width="28" height="28" viewBox="0 0 28 28"><circle cx="14.300" cy="9.500" r="7.700" fill="none" stroke="#d6d6d6" stroke-width="1.200"/><path d="M14.300 8.600v5.400" stroke="#d6d6d6" stroke-width="1.600"/><circle cx="14.300" cy="6.600" r="1" fill="#d6d6d6"/><path d="M5.500 23.500c2.500-4.500 5.500-4.500 8-1.500s6 3.500 9-1.500" fill="none" stroke="#d6d6d6" stroke-width="1.600"/><path d="M2.800 19.800v5.400h5.600z" fill="#d6d6d6"/><path d="M25.300 18.800v5.600h-5.600z" fill="#d6d6d6"/></svg></div>
<span class="t" style="left:495.400px;top:122.300px;font-size:8.600px;line-height:9px;color:#d6d6d6;font-family:'Liberation Mono',monospace;font-weight:bold;letter-spacing:-1.300px;will-change:transform">IP</span>
<span class="t" style="left:541.300px;top:127px;font-size:14.500px;line-height:14.500px;color:#5b5e52;font-family:'Liberation Mono',monospace;letter-spacing:-2.200px;will-change:transform">IP</span>
<div class="b" style="left:655px;top:115px;width:30px;height:30px;background:#3a3f48;border-radius:3px;overflow:hidden;"><svg width="30" height="30" viewBox="0 0 30 30"><rect x="4.600" y="5.700" width="20" height="20" fill="none" stroke="#d6d6d6" stroke-width="1.400"/><path d="M14.300 5.700v20M4.600 15.600h20" stroke="#d6d6d6" stroke-width="1.400"/><rect x="7.200" y="8.400" width="5" height="4.800" fill="#d6d6d6"/></svg></div>
<div style="left:691px;top:119.5px;width:78px;height:21px;background:#2e333c;border-radius:3px;"></div>
<svg style="left:754.2px;top:127.0px" width="10" height="6" viewBox="0 0 10 6"><path d="M0.3 0.3h9.4L5 5.8z" fill="#c8c8c8"/></svg>
<span id="t68" class="t" style="left:697.02px;top:125.00px;font-size:12px;line-height:12px;color:#e4e4e4;transform:scaleX(1.0280);">Velocity:</span>
<div style="left:777.3px;top:119.5px;width:78.4px;height:21px;background:#2e333c;border-radius:3px;"></div>
<svg style="left:840.5px;top:127.0px" width="10" height="6" viewBox="0 0 10 6"><path d="M0.3 0.3h9.4L5 5.8z" fill="#c8c8c8"/></svg>
<span id="t69" class="t" style="left:784.38px;top:125.00px;font-size:12px;line-height:12px;color:#e4e4e4;transform:scaleX(0.9402);">Left Eye:</span>
<div style="left:864px;top:119.5px;width:86px;height:21px;background:#2e333c;border-radius:3px;"></div>
<svg style="left:934.5px;top:127.0px" width="10" height="6" viewBox="0 0 10 6"><path d="M0.3 0.3h9.4L5 5.8z" fill="#c8c8c8"/></svg>
<span id="t70" class="t" style="left:870.07px;top:125.00px;font-size:12px;line-height:12px;color:#e4e4e4;transform:scaleX(0.9549);">Right Eye:</span>
<div style="left:957.7px;top:119.5px;width:91.6px;height:21px;background:#2e333c;border-radius:3px;"></div>
<svg style="left:1034.2px;top:127.0px" width="10" height="6" viewBox="0 0 10 6"><path d="M0.3 0.3h9.4L5 5.8z" fill="#c8c8c8"/></svg>
<span id="t71" class="t" style="left:964.36px;top:125.00px;font-size:12px;line-height:12px;color:#e4e4e4;transform:scaleX(0.9649);">Head Data:</span>
<div style="left:1056px;top:119.5px;width:72.3px;height:21px;background:#2e333c;border-radius:3px;"></div>
<svg style="left:1112px;top:127.0px" width="10" height="6" viewBox="0 0 10 6"><path d="M0.3 0.3h9.4L5 5.8z" fill="#c8c8c8"/></svg>
<span id="t72" class="t" style="left:1062.65px;top:125.00px;font-size:12px;line-height:12px;color:#e4e4e4;transform:scaleX(0.9896);">Target:</span>
<div class="b" style="left:1136.7px;top:116px;width:28px;height:28px;background:#3a3f48;border-radius:3px;overflow:hidden;"><svg width="28" height="28" viewBox="0 0 28 28"><path d="M3.100 2.900h17.800l4.400 4.700v17.300H3.100z" fill="#d6d6d6"/><rect x="8" y="5" width="12.200" height="7" fill="#8c8f8e"/><rect x="17" y="5.600" width="1.900" height="5.200" fill="#d6d6d6"/><rect x="5.700" y="13.900" width="17.800" height="9.900" fill="#8c8f8e"/><path d="M9.500 23.800l3-4 2.300 2.500 4.200-6.300 4.500 5.500v2.300z" fill="#d6d6d6"/><circle cx="9.200" cy="17" r="1.600" fill="#d6d6d6"/></svg></div>
<div class="b" style="left:1169px;top:116px;width:28px;height:28px;background:#3a3f48;border-radius:3px;overflow:hidden;"><svg width="28" height="28" viewBox="0 0 28 28"><circle cx="13.900" cy="13.900" r="11" fill="none" stroke="#d6d6d6" stroke-width="1.300"/></svg></div>
<span id="t73" class="t" style="left:1178.3px;top:121.20px;font-size:19px;line-height:19px;color:#cfcfd0;transform:scaleX(0.9200);">?</span>
<div style="left:384px;top:152px;width:1344px;height:704px;background:#c2c2c2;"></div>
<div style="left:424px;top:192px;width:1294px;height:654px;background:#808080;"></div>
<div style="left:1718px;top:192px;width:10px;height:654px;background:#2a2e35;"></div>
<div style="left:1718px;top:195.5px;width:10px;height:636.5px;background:#3a404c;"></div>
<div style="left:424px;top:846px;width:1304px;height:10px;background:#2a2e35;"></div>
<div style="left:731px;top:846px;width:736px;height:10px;background:#3b434f;"></div>
<svg style="left:0;top:0" width="1920" height="1033" viewBox="0 0 1920 1033"><path d="M527.2 192V846" stroke="#909090" stroke-width="1.300"/><path d="M527.2 186V192" stroke="#222" stroke-width="1.300"/><path d="M634.2 192V846" stroke="#909090" stroke-width="1.300"/><path d="M634.2 186V192" stroke="#222" stroke-width="1.300"/><path d="M741.2 192V846" stroke="#909090" stroke-width="1.300"/><path d="M741.2 186V192" stroke="#222" stroke-width="1.300"/><path d="M848.3 192V846" stroke="#909090" stroke-width="1.300"/><path d="M848.3 186V192" stroke="#222" stroke-width="1.300"/><path d="M955.3 192V846" stroke="#909090" stroke-width="1.300"/><path d="M955.3 186V192" stroke="#222" stroke-width="1.300"/><path d="M1062.3 192V846" stroke="#909090" stroke-width="1.300"/><path d="M1062.3 186V192" stroke="#222" stroke-width="1.300"/><path d="M1169.3 192V846" stroke="#909090" stroke-width="1.300"/><path d="M1169.3 186V192" stroke="#222" stroke-width="1.300"/><path d="M1276.3 192V846" stroke="#909090" stroke-width="1.300"/><path d="M1276.3 186V192" stroke="#222" stroke-width="1.300"/><path d="M1383.4 192V846" stroke="#909090" stroke-width="1.300"/><path d="M1383.4 186V192" stroke="#222" stroke-width="1.300"/><path d="M1490.4 192V846" stroke="#909090" stroke-width="1.300"/><path d="M1490.4 186V192" stroke="#222" stroke-width="1.300"/><path d="M1597.4 192V846" stroke="#909090" stroke-width="1.300"/><path d="M1597.4 186V192" stroke="#222" stroke-width="1.300"/><path d="M1704.4 192V846" stroke="#909090" stroke-width="1.300"/><path d="M1704.4 186V192" stroke="#222" stroke-width="1.300"/><path d="M424 252.4H1718" stroke="#a2a2a2" stroke-width="1"/><path d="M417 252.4H424" stroke="#222" stroke-width="1.300"/><path d="M424 317.4H1718" stroke="#a2a2a2" stroke-width="1"/><path d="M417 317.4H424" stroke="#222" stroke-width="1.300"/><path d="M424 382.4H1718" stroke="#a2a2a2" stroke-width="1"/><path d="M417 382.4H424" stroke="#222" stroke-width="1.300"/><path d="M424 447.5H1718" stroke="#a2a2a2" stroke-width="1"/><path d="M417 447.5H424" stroke="#222" stroke-width="1.300"/><path d="M424 512.5H1718" stroke="#a2a2a2" stroke-width="1"/><path d="M417 512.5H424" stroke="#222" stroke-width="1.300"/><path d="M424 577.5H1718" stroke="#a2a2a2" stroke-width="1"/><path d="M417 577.5H424" stroke="#222" stroke-width="1.300"/><path d="M424 642.5H1718" stroke="#a2a2a2" stroke-width="1"/><path d="M417 642.5H424" stroke="#222" stroke-width="1.300"/><path d="M424 707.5H1718" stroke="#a2a2a2" stroke-width="1"/><path d="M417 707.5H424" stroke="#222" stroke-width="1.300"/><path d="M424 772.6H1718" stroke="#a2a2a2" stroke-width="1"/><path d="M417 772.6H424" stroke="#222" stroke-width="1.300"/><path d="M424 837.6H1718" stroke="#a2a2a2" stroke-width="1"/><path d="M417 837.6H424" stroke="#222" stroke-width="1.300"/><path d="M533.300 192V846" stroke="#25e6ee" stroke-width="4" stroke-dasharray="10 5.100" stroke-dashoffset="5.300"/><path d="M424.0 358.4 L434.5 358.4 L445.0 358.6 L450.0 359.4 L459.2 359.4 L468.4 359.3 L477.7 359.5 L486.9 359.5 L496.1 359.2 L505.3 359.2 L514.6 359.6 L523.8 359.3 L533.0 359.4 L542.3 359.3 L551.6 359.7 L560.8 359.4 L570.1 359.6 L579.4 359.4 L588.7 359.5 L597.9 359.3 L607.2 359.6 L616.5 359.7 L625.8 359.5 L635.1 359.6 L644.3 359.6 L653.6 359.3 L662.9 359.7 L672.2 359.6 L681.4 359.5 L690.7 359.4 L700.0 359.6 L705.0 358.8 L712.0 359.8 L721.7 360.0 L731.4 359.8 L741.1 360.0 L750.9 360.1 L760.6 360.0 L770.3 360.2 L780.0 360.0 L790.0 361.5 L799.3 361.5 L808.6 361.7 L817.9 361.5 L827.1 361.7 L836.4 361.7 L845.7 361.3 L855.0 361.4 L864.3 361.4 L873.6 361.8 L882.9 361.5 L892.1 361.6 L901.4 361.5 L910.7 361.6 L920.0 361.6 L930.0 362.6 L939.3 362.6 L948.6 362.6 L957.9 362.7 L967.1 362.7 L976.4 362.9 L985.7 362.8 L995.0 362.9 L1004.3 362.9 L1013.6 363.0 L1022.9 362.8 L1032.1 362.6 L1041.4 363.0 L1050.7 363.0 L1060.0 362.8 L1071.7 362.9 L1083.3 362.7 L1095.0 362.6 L1100.0 362.0 L1112.3 362.4 L1124.6 362.5 L1135.0 364.5 L1146.7 369.4 L1158.0 375.0 L1169.1 381.5 L1187.0 396.0 L1205.5 412.4 L1224.0 431.0 L1242.3 449.6 L1260.0 467.5 L1276.1 483.4 L1294.0 498.5 L1312.2 512.8 L1329.0 524.0 L1345.3 533.1 L1364.0 541.0 L1373.5 543.7 L1383.1 546.7 L1395.0 549.3 L1407.8 550.7 L1418.5 551.3 L1429.3 551.6 L1440.0 552.0 L1450.0 552.2 L1460.1 552.3 L1470.1 553.0 L1480.2 553.3 L1490.2 553.3 L1500.2 552.8 L1510.1 552.9 L1520.1 552.5 L1530.0 552.1 L1540.0 552.0 L1549.5 551.5 L1559.1 551.3 L1568.6 551.0 L1578.1 550.2 L1587.7 550.1 L1597.2 549.6 L1607.7 549.1 L1618.1 549.2 L1628.6 548.7 L1639.1 548.7 L1649.5 548.5 L1660.0 548.0 L1669.6 547.7 L1679.3 547.6 L1688.9 546.9 L1698.5 546.5 L1708.2 546.4 L1717.8 546.0" fill="none" stroke="#f2f23c" stroke-width="3" stroke-linejoin="round" stroke-linecap="butt"/><path d="M424.0 397.4 L429.1 397.3 L434.2 397.1 L439.3 397.7 L444.4 397.1 L449.6 397.7 L454.7 397.5 L459.8 397.2 L464.9 397.8 L470.0 397.8 L475.2 397.2 L480.5 397.6 L485.8 397.2 L491.0 397.1 L496.2 397.5 L501.5 397.9 L506.8 397.0 L512.0 397.1 L517.2 397.5 L522.5 397.8 L527.8 397.3 L533.0 397.2 L538.4 397.0 L543.8 397.6 L549.2 396.5 L554.6 397.3 L560.0 396.8 L565.0 396.7 L570.0 396.7 L575.0 396.8 L580.0 397.1 L585.0 397.5 L590.2 397.8 L595.3 397.0 L600.5 397.3 L604.0 402.0 L608.0 412.0 L611.5 416.0 L615.0 413.5 L622.0 412.0 L627.2 411.7 L632.3 411.4 L637.5 410.8 L642.7 410.7 L647.9 410.9 L653.1 410.4 L658.3 410.4 L663.5 410.6 L668.8 411.1 L674.0 410.8 L679.2 410.7 L684.4 411.0 L689.6 410.9 L694.8 410.8 L700.0 411.0 L705.0 411.3 L710.0 411.2 L715.0 410.6 L720.0 410.9 L725.0 410.9 L730.0 411.2 L735.0 411.0 L740.0 410.5 L745.0 411.2 L750.0 410.2 L755.0 410.5 L760.0 410.6 L765.2 410.9 L770.5 410.3 L775.7 410.6 L780.9 410.2 L786.1 410.9 L791.4 411.0 L796.6 410.8 L801.8 411.2 L807.0 410.6 L812.3 411.0 L817.5 410.8 L821.0 406.0 L826.9 400.2 L832.4 400.4 L837.9 400.4 L843.5 400.3 L849.0 400.8 L854.5 400.9 L860.0 400.5 L865.0 400.4 L870.0 400.6 L875.0 399.8 L880.0 400.5 L885.0 400.3 L890.0 400.7 L895.0 400.4 L900.0 400.0 L905.0 399.8 L910.0 400.0 L915.0 400.4 L920.0 399.8 L925.0 400.3 L930.0 400.1 L935.0 400.1 L940.0 400.1 L945.0 400.9 L950.0 400.3 L955.0 400.8 L960.0 400.7 L965.0 400.9 L970.0 401.6 L975.0 400.9 L980.0 401.4 L985.0 401.7 L990.0 402.2 L995.0 402.2 L1000.0 402.0 L1005.0 402.4 L1010.0 401.8 L1015.0 402.0 L1020.0 402.0 L1025.0 402.6 L1030.0 402.7 L1035.0 401.9 L1040.0 402.3 L1045.0 402.0 L1050.0 402.1 L1055.0 402.1 L1060.0 402.4 L1065.0 402.5 L1070.0 402.2 L1075.0 402.5 L1082.3 402.0 L1089.6 402.5 L1093.0 406.0 L1095.2 415.4 L1098.0 440.0 L1100.7 474.2 L1102.5 500.0 L1106.0 545.0 L1109.9 592.0 L1117.2 661.8 L1122.0 705.0 L1126.4 739.0 L1129.5 754.0 L1132.0 761.9 L1134.9 764.0 L1137.5 760.0 L1141.1 751.9 L1145.0 749.0 L1150.3 747.1 L1168.7 734.3 L1187.1 717.0 L1205.5 700.4 L1223.9 681.0 L1242.3 661.1 L1248.0 657.5 L1253.3 655.2 L1257.0 658.1 L1260.7 672.9 L1264.3 676.5 L1268.0 667.3 L1273.0 660.0 L1279.0 654.5 L1297.4 636.1 L1312.2 626.9 L1326.9 617.0 L1345.3 608.5 L1371.0 596.4 L1377.1 594.6 L1383.3 592.8 L1389.4 591.2 L1394.5 590.4 L1399.7 589.9 L1404.8 588.8 L1410.0 587.7 L1415.1 586.8 L1421.0 586.6 L1426.9 586.3 L1432.8 585.2 L1438.7 585.8 L1444.6 585.0 L1449.8 584.9 L1455.1 584.7 L1460.3 584.2 L1465.6 583.4 L1470.8 583.0 L1476.1 582.3 L1481.3 582.4 L1486.7 582.5 L1492.0 581.9 L1497.4 581.9 L1502.7 582.1 L1508.1 582.0 L1513.4 582.2 L1518.8 581.9 L1524.1 581.9 L1529.5 582.0 L1534.8 582.0 L1540.2 582.4 L1545.0 586.0 L1550.5 594.5 L1554.0 592.5 L1558.6 590.8 L1563.7 590.8 L1568.9 590.5 L1574.0 591.5 L1579.2 591.4 L1584.3 591.0 L1589.4 591.2 L1594.6 591.4 L1599.7 591.5 L1604.9 591.4 L1610.0 591.9 L1615.0 592.6 L1620.0 593.0 L1625.1 592.7 L1630.1 593.0 L1635.1 592.8 L1640.1 593.1 L1645.1 593.6 L1650.1 593.8 L1655.2 594.7 L1660.2 594.3 L1665.2 594.9 L1671.0 594.4 L1676.8 595.4 L1682.6 595.0 L1688.4 594.6 L1694.2 595.0 L1700.0 595.0 L1705.9 594.1 L1711.9 594.2 L1717.8 593.8" fill="none" stroke="#1414e2" stroke-width="3" stroke-linejoin="round" stroke-linecap="butt"/><path d="M424.0 221.2 L429.1 221.2 L434.2 221.3 L439.3 221.7 L444.4 221.3 L449.5 221.3 L454.5 221.5 L459.6 221.0 L464.7 221.4 L469.8 221.6 L474.9 221.8 L480.0 221.5 L485.3 221.1 L490.6 221.3 L495.9 221.1 L501.2 222.0 L506.5 221.9 L511.8 221.2 L517.1 222.2 L522.4 222.3 L527.7 221.9 L533.0 221.8 L538.4 221.8 L543.8 221.2 L549.2 220.9 L554.6 221.4 L560.0 221.2 L565.0 220.9 L570.0 221.2 L575.0 221.4 L580.0 221.3 L585.0 222.0 L590.2 221.9 L595.3 221.8 L600.5 221.8 L604.0 226.0 L608.0 238.0 L611.0 241.8 L614.0 239.5 L620.0 238.0 L625.8 237.7 L631.7 236.6 L637.5 235.9 L642.7 236.1 L647.9 236.0 L653.1 236.2 L658.3 236.0 L663.5 235.8 L668.8 236.6 L674.0 236.7 L679.2 236.5 L684.4 236.4 L689.6 236.0 L694.8 236.0 L700.0 236.3 L705.0 236.0 L710.0 235.7 L715.0 236.4 L720.0 236.0 L725.0 236.4 L730.0 235.8 L735.0 236.4 L740.0 236.2 L745.0 235.2 L750.0 235.4 L755.0 236.1 L760.0 235.6 L765.2 235.6 L770.5 236.2 L775.7 235.7 L780.9 235.3 L786.1 236.0 L791.4 236.2 L796.6 235.7 L801.8 235.6 L807.0 235.9 L812.3 236.7 L817.5 236.2 L821.0 232.0 L826.9 227.2 L832.4 227.5 L837.9 226.9 L843.5 227.1 L849.0 227.0 L854.5 227.0 L860.0 227.5 L865.0 227.8 L870.0 227.1 L875.0 227.5 L880.0 227.3 L885.0 227.0 L890.0 227.6 L895.0 226.9 L900.0 227.3 L905.0 227.5 L910.0 227.0 L915.0 227.5 L920.0 227.3 L925.0 227.5 L930.0 228.3 L935.0 228.2 L940.0 227.7 L945.0 228.5 L950.0 227.8 L955.0 228.2 L960.0 228.2 L965.0 228.9 L970.0 228.8 L975.0 228.3 L980.0 229.5 L985.0 228.8 L990.0 228.9 L995.0 229.7 L1000.0 229.5 L1005.0 229.3 L1010.0 229.4 L1015.0 229.1 L1020.0 229.2 L1025.0 229.8 L1030.0 229.4 L1035.0 229.9 L1040.0 229.8 L1045.0 229.9 L1050.0 230.2 L1055.0 231.1 L1060.0 230.8 L1065.0 230.7 L1070.0 230.7 L1075.0 230.5 L1081.4 230.6 L1087.8 229.8 L1092.0 232.0 L1095.2 242.5 L1098.0 268.0 L1100.7 301.4 L1106.2 363.9 L1113.6 444.8 L1119.0 500.0 L1125.5 555.0 L1130.0 585.0 L1132.5 592.0 L1134.9 594.9 L1138.0 590.0 L1143.0 583.9 L1150.0 582.5 L1155.0 581.4 L1160.0 581.0 L1165.0 580.7 L1170.0 581.5 L1175.0 581.5 L1180.0 581.2 L1185.0 580.8 L1190.0 580.7 L1195.0 581.2 L1200.0 580.8 L1205.0 581.3 L1210.0 580.6 L1215.0 581.4 L1220.0 581.0 L1225.0 581.0 L1230.0 580.4 L1235.0 579.8 L1240.0 579.5 L1246.0 578.5 L1252.0 580.0 L1257.0 585.3 L1260.0 604.0 L1262.5 614.0 L1266.0 611.0 L1275.4 607.4 L1281.6 606.9 L1287.7 606.8 L1293.8 607.8 L1300.0 607.2 L1305.1 607.0 L1310.2 607.7 L1315.2 607.3 L1320.3 608.1 L1325.4 608.0 L1330.5 608.0 L1337.8 608.5 L1345.0 609.5 L1350.0 609.1 L1355.0 609.6 L1360.0 608.8 L1365.0 608.9 L1370.0 609.2 L1375.0 609.5 L1380.0 609.2 L1385.0 608.7 L1390.0 609.4 L1395.0 608.5 L1400.0 608.8 L1405.0 607.9 L1410.0 607.8 L1415.0 607.7 L1420.0 606.9 L1425.0 606.7 L1430.0 606.6 L1435.0 606.4 L1440.0 606.0 L1445.2 605.3 L1450.3 605.3 L1455.5 605.6 L1460.7 605.4 L1465.8 604.7 L1471.0 604.5 L1476.1 604.1 L1481.3 603.7 L1486.4 603.3 L1491.4 603.2 L1496.5 603.2 L1501.5 604.2 L1506.6 603.9 L1511.7 604.2 L1516.7 603.2 L1521.8 603.8 L1526.8 603.7 L1531.9 604.0 L1536.9 603.5 L1542.0 603.7 L1546.0 607.0 L1550.5 614.7 L1555.0 613.0 L1562.0 611.4 L1567.3 611.9 L1572.7 610.8 L1578.0 611.3 L1583.3 611.4 L1588.7 611.5 L1594.0 611.3 L1599.3 611.2 L1604.7 611.2 L1610.0 610.8 L1615.0 611.3 L1620.0 610.8 L1625.0 611.2 L1630.0 611.5 L1635.0 611.5 L1640.0 611.1 L1645.0 611.6 L1650.0 611.7 L1655.0 611.5 L1660.0 611.6 L1665.0 611.5 L1670.3 611.1 L1675.6 611.1 L1680.8 610.9 L1686.1 610.1 L1691.4 610.5 L1696.7 610.7 L1702.0 610.3 L1707.2 609.9 L1712.5 609.3 L1717.8 609.2" fill="none" stroke="#20e820" stroke-width="3.6" stroke-linejoin="round" stroke-linecap="butt"/><circle cx="533.300" cy="221.800" r="4.800" fill="#20e820" stroke="#20e820" stroke-width="1.500"/><circle cx="533.200" cy="359.300" r="4.500" fill="none" stroke="#f2f23c" stroke-width="1.600"/><circle cx="533.200" cy="397.200" r="4.500" fill="none" stroke="#1414e2" stroke-width="1.600"/><path d="M1290.800 237.700H1374" stroke="#20e820" stroke-width="3.600"/><path d="M1290.800 270.100H1374" stroke="#f2f23c" stroke-width="3.200"/><path d="M1290.800 303.200H1374" stroke="#1414e2" stroke-width="2.800"/></svg>
<span id="t74" class="t" style="left:515.90px;top:168.70px;font-size:9.6px;line-height:9.6px;color:#0a0a0a;transform:scaleX(1.1411);">805.7</span>
<span id="t75" class="t" style="left:612.69px;top:168.70px;font-size:9.6px;line-height:9.6px;color:#0a0a0a;transform:scaleX(1.1629);">940.0</span>
<span id="t76" class="t" style="left:720.40px;top:168.70px;font-size:9.6px;line-height:9.6px;color:#0a0a0a;transform:scaleX(1.1418);">1074.2</span>
<span id="t77" class="t" style="left:827.71px;top:168.70px;font-size:9.6px;line-height:9.6px;color:#0a0a0a;transform:scaleX(1.1206);">1208.5</span>
<span id="t78" class="t" style="left:935.11px;top:168.70px;font-size:9.6px;line-height:9.6px;color:#0a0a0a;transform:scaleX(1.1171);">1342.8</span>
<span id="t79" class="t" style="left:1041.71px;top:168.70px;font-size:9.6px;line-height:9.6px;color:#0a0a0a;transform:scaleX(1.1206);">1477.1</span>
<span id="t80" class="t" style="left:1148.69px;top:168.70px;font-size:9.6px;line-height:9.6px;color:#0a0a0a;transform:scaleX(1.1492);">1611.3</span>
<span id="t81" class="t" style="left:1255.41px;top:168.70px;font-size:9.6px;line-height:9.6px;color:#0a0a0a;transform:scaleX(1.1206);">1745.6</span>
<span id="t82" class="t" style="left:1362.71px;top:168.70px;font-size:9.6px;line-height:9.6px;color:#0a0a0a;transform:scaleX(1.1206);">1879.9</span>
<span id="t83" class="t" style="left:1468.38px;top:168.70px;font-size:9.6px;line-height:9.6px;color:#0a0a0a;transform:scaleX(1.1666);">2014.2</span>
<span id="t84" class="t" style="left:1567.89px;top:168.70px;font-size:9.6px;line-height:9.6px;color:#0a0a0a;transform:scaleX(1.1560);">2148.5</span>
<span id="t85" class="t" style="left:1667.49px;top:168.70px;font-size:9.6px;line-height:9.6px;color:#0a0a0a;transform:scaleX(1.1489);">2282.7</span>
<div style="left:384px;top:192px;width:40px;height:30px;overflow:hidden;"><span class="t" style="left:1.800px;top:-5px;font-size:9.600px;line-height:9.600px;color:#0a0a0a;transform:scaleX(1.09)">-0.0</span></div>
<span id="t86" class="t" style="left:385.20px;top:238.20px;font-size:9.6px;line-height:9.6px;color:#0a0a0a;transform:scaleX(1.1411);">179.8</span>
<span id="t87" class="t" style="left:385.20px;top:303.22px;font-size:9.6px;line-height:9.6px;color:#0a0a0a;transform:scaleX(1.1411);">359.7</span>
<span id="t88" class="t" style="left:385.20px;top:368.24px;font-size:9.6px;line-height:9.6px;color:#0a0a0a;transform:scaleX(1.1411);">539.5</span>
<span id="t89" class="t" style="left:385.20px;top:433.26px;font-size:9.6px;line-height:9.6px;color:#0a0a0a;transform:scaleX(1.1411);">719.3</span>
<span id="t90" class="t" style="left:385.20px;top:498.28px;font-size:9.6px;line-height:9.6px;color:#0a0a0a;transform:scaleX(1.1411);">899.1</span>
<span id="t91" class="t" style="left:385.20px;top:563.30px;font-size:9.6px;line-height:9.6px;color:#0a0a0a;transform:scaleX(1.1348);">1079.0</span>
<span id="t92" class="t" style="left:385.20px;top:628.32px;font-size:9.6px;line-height:9.6px;color:#0a0a0a;transform:scaleX(1.1348);">1258.8</span>
<span id="t93" class="t" style="left:385.20px;top:693.34px;font-size:9.6px;line-height:9.6px;color:#0a0a0a;transform:scaleX(1.1348);">1438.6</span>
<span id="t94" class="t" style="left:385.20px;top:758.36px;font-size:9.6px;line-height:9.6px;color:#0a0a0a;transform:scaleX(1.1348);">1618.4</span>
<span id="t95" class="t" style="left:385.20px;top:823.38px;font-size:9.6px;line-height:9.6px;color:#0a0a0a;transform:scaleX(1.1348);">1798.3</span>
<span id="t96" class="t" style="left:1387.95px;top:222.50px;font-size:29px;line-height:29px;color:#ffffff;transform:scaleX(0.9083);">Gaze (Head + Eye)</span>
<span id="t97" class="t" style="left:1387.85px;top:254.80px;font-size:29px;line-height:29px;color:#ffffff;transform:scaleX(0.9737);">Head</span>
<span id="t98" class="t" style="left:1389.58px;top:286.80px;font-size:29px;line-height:29px;color:#ffffff;transform:scaleX(0.8933);">Eye</span>
<div style="left:381px;top:857px;width:1350px;height:1px;background:#30353d;"></div>
<div style="left:381px;top:861px;width:1350.5px;height:22.5px;border:1px solid #343941;"></div>
<span id="t99" class="t" style="left:382.35px;top:865.90px;font-size:12px;line-height:12px;color:#e4e4e4;transform:scaleX(0.9823);">View Trial Data in 2D Temporal Graph Mode</span>
<span id="t100" class="t" style="left:1592.19px;top:866.60px;font-size:12px;line-height:12px;color:#e4e4e4;transform:scaleX(0.9193);">Sample:406  813.20,54.21</span>
<div style="left:381px;top:890px;width:1350px;height:1px;background:#343941;"></div>
<svg style="left:1049px;top:885.8px" width="14" height="3" viewBox="0 0 14 3"><circle cx="1.800" cy="1.500" r="1.300" fill="#c8c8c8"/><circle cx="7" cy="1.500" r="1.300" fill="#c8c8c8"/><circle cx="12.200" cy="1.500" r="1.300" fill="#c8c8c8"/></svg>
<div style="left:381px;top:890px;width:1350px;height:140px;border-left:1px solid #343941;border-right:1px solid #343941;"></div>
<div class="b" style="left:385px;top:894.3px;width:37.7px;height:35.4px;background:#3a3f48;border-radius:3px;overflow:hidden;"><svg width="37.7" height="35.4" viewBox="0 0 37.7 35.4"><path d="M7.600 6.700L29.500 17.800L7.600 28.900z" fill="#d6d6d6"/></svg></div>
<div class="b" style="left:430px;top:894.3px;width:35.4px;height:35.4px;background:#262a32;border-radius:3px;overflow:hidden;"><svg width="35.4" height="35.4" viewBox="0 0 35.4 35.4"><rect x="6.600" y="6.700" width="22.600" height="21.900" fill="#868987"/></svg></div>
<div class="b" style="left:473.8px;top:894.3px;width:27px;height:15.5px;background:#252931;border-radius:2px;overflow:hidden;"><svg width="27" height="15.5" viewBox="0 0 27 15.5"><path d="M16.900 2.600v10l-11.100-5z" fill="#8a8d8c"/><path d="M18.700 2.600v10" stroke="#8a8d8c" stroke-width="1.300"/></svg></div>
<div class="b" style="left:506.4px;top:894.3px;width:27px;height:15.5px;background:#252931;border-radius:2px;overflow:hidden;"><svg width="27" height="15.5" viewBox="0 0 27 15.5"><path d="M10.300 2.600v10l10.600-5z" fill="#8a8d8c"/><path d="M8.500 2.600v10" stroke="#8a8d8c" stroke-width="1.300"/></svg></div>
<div class="b" style="left:473.8px;top:914.3px;width:27px;height:15.5px;background:#252931;border-radius:2px;overflow:hidden;"><svg width="27" height="15.5" viewBox="0 0 27 15.5"><path d="M13 3v9.800l-9.800-4.900zM23.400 3v9.800l-9.800-4.900z" fill="#8a8d8c"/></svg></div>
<div class="b" style="left:506.4px;top:914.3px;width:27px;height:15.5px;background:#252931;border-radius:2px;overflow:hidden;"><svg width="27" height="15.5" viewBox="0 0 27 15.5"><path d="M4.500 3v9.800l9.800-4.900zM14.700 3v9.800l9.900-4.900z" fill="#8a8d8c"/></svg></div>
<div class="b" style="left:541px;top:894.3px;width:34px;height:35.4px;background:#3a3f48;border-radius:3px;overflow:hidden;"><svg width="34" height="35.4" viewBox="0 0 34 35.4"><path d="M12.500 10H6.200v15.300h7M23.300 10h4.500v15.300h-4" fill="none" stroke="#d6d6d6" stroke-width="1.500"/><path d="M12.200 6.600l4.800 3.400-4.800 3.400z" fill="#d6d6d6"/><path d="M23.800 21.900l-5 3.400 5 3.400z" fill="#d6d6d6"/></svg></div>
<div class="b" style="left:581px;top:894.3px;width:37.7px;height:35.4px;background:#3a3f48;border-radius:3px;overflow:hidden;"><svg width="37.7" height="35.4" viewBox="0 0 37.7 35.4"><path d="M7.700 12.600h9.300L30.100 6.700v22.300L17 22.900H7.700z" fill="#d6d6d6"/></svg></div>
<svg style="left:0;top:0" width="1920" height="1033" viewBox="0 0 1920 1033"><path d="M648 900H853" stroke="#5f6267" stroke-width="2"/><path d="M638 895.200h12.400v5l-6.200 5.400-6.200-5.400z" fill="#6e7175"/><path d="M644.1 909.5V916.5" stroke="#8f9296" stroke-width="1.4"/><path d="M654.5 911V915" stroke="#5c5f64" stroke-width="1.2"/><path d="M664.9 911V915" stroke="#5c5f64" stroke-width="1.2"/><path d="M675.2 911V915" stroke="#5c5f64" stroke-width="1.2"/><path d="M685.6 911V915" stroke="#5c5f64" stroke-width="1.2"/><path d="M696.0 911V915" stroke="#5c5f64" stroke-width="1.2"/><path d="M706.4 911V915" stroke="#5c5f64" stroke-width="1.2"/><path d="M716.7 911V915" stroke="#5c5f64" stroke-width="1.2"/><path d="M727.1 911V915" stroke="#5c5f64" stroke-width="1.2"/><path d="M737.5 911V915" stroke="#5c5f64" stroke-width="1.2"/><path d="M747.9 909.5V916.5" stroke="#8f9296" stroke-width="1.4"/><path d="M758.2 911V915" stroke="#5c5f64" stroke-width="1.2"/><path d="M768.6 911V915" stroke="#5c5f64" stroke-width="1.2"/><path d="M779.0 911V915" stroke="#5c5f64" stroke-width="1.2"/><path d="M789.4 911V915" stroke="#5c5f64" stroke-width="1.2"/><path d="M799.7 911V915" stroke="#5c5f64" stroke-width="1.2"/><path d="M810.1 911V915" stroke="#5c5f64" stroke-width="1.2"/><path d="M820.5 911V915" stroke="#5c5f64" stroke-width="1.2"/><path d="M830.9 911V915" stroke="#5c5f64" stroke-width="1.2"/><path d="M841.2 911V915" stroke="#5c5f64" stroke-width="1.2"/><path d="M851.6 909.5V916.5" stroke="#8f9296" stroke-width="1.4"/></svg>
<span id="t101" class="t" style="left:640.20px;top:920.50px;font-size:12px;line-height:12px;color:#e4e4e4;transform:scaleX(1.0619);">0</span>
<span id="t102" class="t" style="left:736.11px;top:920.50px;font-size:12px;line-height:12px;color:#e4e4e4;transform:scaleX(0.8904);">1427</span>
<span id="t103" class="t" style="left:829.38px;top:920.50px;font-size:12px;line-height:12px;color:#e4e4e4;transform:scaleX(0.9461);">2855 ms</span>
<div style="left:877.3px;top:900.5px;width:80px;height:23px;background:#2e333c;border-radius:3px;"></div>
<svg style="left:942.2px;top:909.0px" width="10" height="6" viewBox="0 0 10 6"><path d="M0.3 0.3h9.4L5 5.8z" fill="#c8c8c8"/></svg>
<span id="t104" class="t" style="left:901.12px;top:906.00px;font-size:12px;line-height:12px;color:#e4e4e4;transform:scaleX(0.8797);">1x</span>
<div class="b" style="left:964px;top:895px;width:34.3px;height:34px;background:#3a3f48;border-radius:3px;overflow:hidden;"><svg width="34.3" height="34" viewBox="0 0 34.3 34"><circle cx="16.700" cy="17.100" r="11.200" fill="none" stroke="#d6d6d6" stroke-width="1.300"/><path d="M6.300 15.600L13.900 12.400L26.800 20.800M6.300 18.900L14.600 20.600L26.500 12.800" fill="none" stroke="#d6d6d6" stroke-width="1.200"/></svg></div>
<div class="b" style="left:1004px;top:894px;width:30px;height:16px;background:#3a3f48;border-radius:3px;overflow:hidden;"><svg width="30" height="16" viewBox="0 0 30 16"><circle cx="14.200" cy="8" r="5.200" fill="none" stroke="#d6d6d6" stroke-width="1.100"/><path d="M11.200 8h6M14.200 5v6" stroke="#d6d6d6" stroke-width="1.100"/></svg></div>
<div class="b" style="left:1004px;top:914px;width:30px;height:16px;background:#3a3f48;border-radius:3px;overflow:hidden;"><svg width="30" height="16" viewBox="0 0 30 16"><circle cx="14.200" cy="8" r="5.200" fill="none" stroke="#d6d6d6" stroke-width="1.100"/><path d="M11.200 8h6" stroke="#d6d6d6" stroke-width="1.100"/></svg></div>
<div style="left:1040px;top:902.5px;width:100.7px;height:18.5px;background:#2e333c;border-radius:3px;"></div>
<svg style="left:1126.3px;top:908.75px" width="10" height="6" viewBox="0 0 10 6"><path d="M0.3 0.3h9.4L5 5.8z" fill="#c8c8c8"/></svg>
<span id="t105" class="t" style="left:1046.65px;top:906.00px;font-size:12px;line-height:12px;color:#e4e4e4;transform:scaleX(0.9801);">Channels</span>
<div class="b" style="left:1707px;top:894px;width:21.5px;height:21.5px;background:#3b4049;border-radius:4px;overflow:hidden;"><svg width="21.5" height="21.5" viewBox="0 0 21.5 21.5"><rect x="3.500" y="8.500" width="9.500" height="9.500" fill="none" stroke="#d6d6d6" stroke-width="1.200"/><path d="M8 6V4.500h8" fill="none" stroke="#d6d6d6" stroke-width="1.200"/><path d="M15 2.200l3.500 2.300-3.500 2.300z" fill="#d6d6d6"/></svg></div>
<div style="left:383px;top:933.5px;width:1346px;height:1px;background:#343941;"></div>
<div style="left:383px;top:933.5px;width:1px;height:94.5px;background:#343941;"></div>
<div style="left:424px;top:956px;width:318.5px;height:61.5px;background:#35383d;"></div>
<div style="left:742.5px;top:956px;width:2px;height:61.5px;background:#0c0d0f;"></div>
<div style="left:1511.7px;top:956px;width:216.5px;height:61.5px;background:#35383d;"></div>
<div style="left:424px;top:1017.5px;width:1304.5px;height:9.5px;background:#2a2e35;"></div>
<div style="left:424px;top:1017.5px;width:1258.5px;height:9.5px;background:#3b434f;"></div>
<div style="left:381px;top:1027.5px;width:1350px;height:2px;background:#15181d;"></div>
<svg style="left:0;top:0" width="1920" height="1033" viewBox="0 0 1920 1033"><path d="M425.0 948V955.500" stroke="#f2f2f2" stroke-width="2"/><path d="M481.0 950.500V955.500" stroke="#f2f2f2" stroke-width="2"/><path d="M537.0 948V955.500" stroke="#f2f2f2" stroke-width="2"/><path d="M593.0 950.500V955.500" stroke="#f2f2f2" stroke-width="2"/><path d="M649.0 948V955.500" stroke="#f2f2f2" stroke-width="2"/><path d="M705.0 950.500V955.500" stroke="#f2f2f2" stroke-width="2"/><path d="M761.0 948V955.500" stroke="#f2f2f2" stroke-width="2"/><path d="M817.0 950.500V955.500" stroke="#f2f2f2" stroke-width="2"/><path d="M873.0 948V955.500" stroke="#f2f2f2" stroke-width="2"/><path d="M929.0 950.500V955.500" stroke="#f2f2f2" stroke-width="2"/><path d="M985.0 948V955.500" stroke="#f2f2f2" stroke-width="2"/><path d="M1041.0 950.500V955.500" stroke="#f2f2f2" stroke-width="2"/><path d="M1097.0 948V955.500" stroke="#f2f2f2" stroke-width="2"/><path d="M1153.0 950.500V955.500" stroke="#f2f2f2" stroke-width="2"/><path d="M1209.0 948V955.500" stroke="#f2f2f2" stroke-width="2"/><path d="M1265.0 950.500V955.500" stroke="#f2f2f2" stroke-width="2"/><path d="M1321.0 948V955.500" stroke="#f2f2f2" stroke-width="2"/><path d="M1377.0 950.500V955.500" stroke="#f2f2f2" stroke-width="2"/><path d="M1433.0 948V955.500" stroke="#f2f2f2" stroke-width="2"/><path d="M1489.0 950.500V955.500" stroke="#f2f2f2" stroke-width="2"/><path d="M1545.0 948V955.500" stroke="#f2f2f2" stroke-width="2"/><path d="M1601.0 950.500V955.500" stroke="#f2f2f2" stroke-width="2"/><path d="M1657.0 948V955.500" stroke="#f2f2f2" stroke-width="2"/><path d="M425 955.500V1017.500" stroke="#bb2cbb" stroke-width="2.400"/><path d="M438.100 950V1017.500" stroke="#22c822" stroke-width="3.400"/><circle cx="437.900" cy="948.400" r="5.300" fill="#24e424"/></svg>
<span id="t106" class="t" style="left:423.79px;top:934.80px;font-size:12px;line-height:12px;color:#f0f0f0;transform:scaleX(0.9213);">00.000</span>
<span id="t107" class="t" style="left:520.09px;top:934.80px;font-size:12px;line-height:12px;color:#f0f0f0;transform:scaleX(0.9213);">00.236</span>
<span id="t108" class="t" style="left:632.09px;top:934.80px;font-size:12px;line-height:12px;color:#f0f0f0;transform:scaleX(0.9213);">00.473</span>
<span id="t109" class="t" style="left:744.09px;top:934.80px;font-size:12px;line-height:12px;color:#f0f0f0;transform:scaleX(0.9213);">00.710</span>
<span id="t110" class="t" style="left:856.09px;top:934.80px;font-size:12px;line-height:12px;color:#f0f0f0;transform:scaleX(0.9213);">00.947</span>
<span id="t111" class="t" style="left:968.09px;top:934.80px;font-size:12px;line-height:12px;color:#f0f0f0;transform:scaleX(0.9213);">01.184</span>
<span id="t112" class="t" style="left:1080.09px;top:934.80px;font-size:12px;line-height:12px;color:#f0f0f0;transform:scaleX(0.9213);">01.421</span>
<span id="t113" class="t" style="left:1192.09px;top:934.80px;font-size:12px;line-height:12px;color:#f0f0f0;transform:scaleX(0.9213);">01.658</span>
<span id="t114" class="t" style="left:1304.09px;top:934.80px;font-size:12px;line-height:12px;color:#f0f0f0;transform:scaleX(0.9213);">01.894</span>
<span id="t115" class="t" style="left:1416.09px;top:934.80px;font-size:12px;line-height:12px;color:#f0f0f0;transform:scaleX(0.9213);">02.131</span>
<span id="t116" class="t" style="left:1528.09px;top:934.80px;font-size:12px;line-height:12px;color:#f0f0f0;transform:scaleX(0.9213);">02.368</span>
<span id="t117" class="t" style="left:1622.91px;top:934.80px;font-size:12px;line-height:12px;color:#f0f0f0;transform:scaleX(0.8931);">02.605</span>
<div style="left:0px;top:1031px;width:1920px;height:1px;background:#71747a;"></div>
<div style="left:0px;top:1032px;width:1920px;height:1px;background:#eceef0;"></div>
<svg style="left:1732px;top:86px" width="8" height="27" viewBox="1732 86 8 27"><path d="M1738.200 87.500v8l-5.400-4z" fill="#f0f0f0"/><path d="M1733.600 103.600v8l5.400-4z" fill="#8a8d90"/></svg>
<span id="t118" class="t" style="left:1750.95px;top:92.20px;font-size:12px;line-height:12px;color:#e4e4e4;transform:scaleX(0.9880);">Interest Area Editor</span>
<div style="left:1740px;top:111px;width:124px;height:3px;background:#4a6fc6;"></div>
<div style="left:1741.5px;top:114px;width:121px;height:437.5px;border:1px solid #343941;border-top:none;"></div>
<div style="left:1851px;top:116.5px;width:10.5px;height:414.5px;background:#343a46;"></div>
<div style="left:1742px;top:540px;width:57px;height:11.5px;background:#343a46;"></div>
<div style="left:1799px;top:540px;width:52px;height:11.5px;background:#262a32;"></div>
<div class="b" style="left:1830.5px;top:129px;width:20.5px;height:28px;background:#2a2e36;border-radius:2px;overflow:hidden;border-top-right-radius:0;border-bottom-right-radius:0;"><svg width="20.5" height="28" viewBox="0 0 20.5 28"><rect x="3" y="6" width="18" height="15.500" fill="#d6d6d6"/></svg></div>
<span id="t119" class="t" style="left:1752.52px;top:136.80px;font-size:12px;line-height:12px;color:#e4e4e4;transform:scaleX(1.0266);">New</span>
<div class="b" style="left:1830.5px;top:172.8px;width:20.5px;height:26.3px;background:#4f86f6;border-radius:0px;overflow:hidden;border-top-right-radius:0;border-bottom-right-radius:0;"><svg width="20.5" height="26.3" viewBox="0 0 20.5 26.3"><path d="M6.900 4.600v17.300l4.400-4 3.300 7 2.800-1.300-3.300-6.800 5.900-.3z" fill="#e6deda"/></svg></div>
<span id="t120" class="t" style="left:1752.50px;top:179.30px;font-size:12px;line-height:12px;color:#e4e4e4;transform:scaleX(1.0658);">Mode</span>
<div class="b" style="left:1830.5px;top:215.3px;width:20.5px;height:28px;background:#2a2e36;border-radius:2px;overflow:hidden;border-top-right-radius:0;border-bottom-right-radius:0;"><svg width="20.5" height="28" viewBox="0 0 20.5 28"><path d="M4 6.600h5.600l1.600 2.600h9.500v16.300H4z" fill="#d6d6d6"/><rect x="8.600" y="11.400" width="12.200" height="11.800" fill="#6f7271"/><path d="M7.300 11.400L4 25.500h3l3-12.500z" fill="#d6d6d6"/><circle cx="12.300" cy="20" r="1.900" fill="#d6d6d6"/><rect x="17" y="13" width="4" height="5" fill="#d6d6d6"/></svg></div>
<span id="t121" class="t" style="left:1752.57px;top:223.10px;font-size:12px;line-height:12px;color:#e4e4e4;transform:scaleX(0.9598);">File</span>
<div class="b" style="left:1830.5px;top:258.5px;width:20.5px;height:28px;background:#2a2e36;border-radius:2px;overflow:hidden;border-top-right-radius:0;border-bottom-right-radius:0;"><svg width="20.5" height="28" viewBox="0 0 20.5 28"><path d="M3.600 4.300h13a3 3 0 0 1 3.500 3v19H3.600z" fill="#7d807e"/></svg></div>
<span id="t122" class="t" style="left:1752.53px;top:266.30px;font-size:12px;line-height:12px;color:#e4e4e4;transform:scaleX(1.0127);">Dynamic IA</span>
<div class="b" style="left:1830.5px;top:300.5px;width:20.5px;height:28px;background:#2a2e36;border-radius:2px;overflow:hidden;border-top-right-radius:0;border-bottom-right-radius:0;"><svg width="20.5" height="28" viewBox="0 0 20.5 28"><path d="M2.300 3.900L21 12.600v1.300L2.300 13.900zM2.300 15.200H21v1.300L2.300 25.900z" fill="#8c8f8e"/></svg></div>
<span id="t123" class="t" style="left:1752.51px;top:308.30px;font-size:12px;line-height:12px;color:#e4e4e4;transform:scaleX(1.0489);">Split</span>
<div class="b" style="left:1830.5px;top:343px;width:20.5px;height:28px;background:#2a2e36;border-radius:2px;overflow:hidden;border-top-right-radius:0;border-bottom-right-radius:0;"><svg width="20.5" height="28" viewBox="0 0 20.5 28"><path d="M2.600 3.700h13.800v6.800M2.600 3.700v12.300h6.800a11 11 0 0 0 11 6h1" fill="none" stroke="#8a8d8e" stroke-width="1.100"/><path d="M16.400 10.500a6 6 0 0 0 5 4" fill="none" stroke="#8a8d8e" stroke-width="1.100"/></svg></div>
<span id="t124" class="t" style="left:1752.51px;top:350.80px;font-size:12px;line-height:12px;color:#e4e4e4;transform:scaleX(1.0491);">Merge</span>
<div class="b" style="left:1830.5px;top:385px;width:20.5px;height:28px;background:#2a2e36;border-radius:2px;overflow:hidden;border-top-right-radius:0;border-bottom-right-radius:0;"><svg width="20.5" height="28" viewBox="0 0 20.5 28"><path d="M3.200 21.300a3 3 0 0 1 .3-4.200l3.800-3.700a3 3 0 0 1 4.200 4.200l-3.800 3.700a3 3 0 0 1-4.500 0z" fill="none" stroke="#8a8d8e" stroke-width="1.400"/><path d="M11.300 13.200a3 3 0 0 1 .3-4.200l3.800-3.700a3 3 0 0 1 4.200 4.200l-3.800 3.700a3 3 0 0 1-4.500 0z" fill="none" stroke="#8a8d8e" stroke-width="1.400"/><path d="M8.500 16.200l6-6" stroke="#8a8d8e" stroke-width="1.400"/></svg></div>
<span id="t125" class="t" style="left:1752.50px;top:392.80px;font-size:12px;line-height:12px;color:#e4e4e4;transform:scaleX(1.0630);">Link</span>
<div class="b" style="left:1830.5px;top:427px;width:20.5px;height:28px;background:#2a2e36;border-radius:2px;overflow:hidden;border-top-right-radius:0;border-bottom-right-radius:0;"><svg width="20.5" height="28" viewBox="0 0 20.5 28"><path d="M2.700 5.400l8.600 6.500 8.700-6.500v19.700H2.700z" fill="#8f9291"/></svg></div>
<span id="t126" class="t" style="left:1752.52px;top:434.80px;font-size:12px;line-height:12px;color:#e4e4e4;transform:scaleX(1.0267);">Convert</span>
<div class="b" style="left:1830.5px;top:469px;width:20.5px;height:28px;background:#2a2e36;border-radius:2px;overflow:hidden;border-top-right-radius:0;border-bottom-right-radius:0;"><svg width="20.5" height="28" viewBox="0 0 20.5 28"><path d="M2.700 26L11.500 6.500V26zM13 26v-8.300l7.500 8.300z" fill="#8f9291"/><path d="M21 10.500h-5" stroke="#8f9291" stroke-width="1.100"/><path d="M17.500 8.200l-3.500 2.300 3.500 2.300z" fill="#8f9291"/></svg></div>
<span id="t127" class="t" style="left:1752.54px;top:476.80px;font-size:12px;line-height:12px;color:#e4e4e4;transform:scaleX(0.9988);">Rotate</span>
<div class="b" style="left:1830.5px;top:510.5px;width:20.5px;height:28px;background:#2a2e36;border-radius:2px;overflow:hidden;border-top-right-radius:0;border-bottom-right-radius:0;"><svg width="20.5" height="28" viewBox="0 0 20.5 28"><path d="M2.700 25.100L11.200 4.700v20.400zM13.200 25.100V4.700l8 20.400z" fill="#8f9291"/></svg></div>
<span id="t128" class="t" style="left:1752.50px;top:518.30px;font-size:12px;line-height:12px;color:#e4e4e4;transform:scaleX(1.0597);">Flip</span>
<svg style="left:1795px;top:555.0px" width="14" height="3" viewBox="0 0 14 3"><circle cx="1.800" cy="1.500" r="1.300" fill="#c8c8c8"/><circle cx="7" cy="1.500" r="1.300" fill="#c8c8c8"/><circle cx="12.200" cy="1.500" r="1.300" fill="#c8c8c8"/></svg>
<svg style="left:1734.7px;top:549.5px" width="3" height="14" viewBox="0 0 3 14"><circle cy="1.800" cx="1.500" r="1.300" fill="#c8c8c8"/><circle cy="7" cx="1.500" r="1.300" fill="#c8c8c8"/><circle cy="12.200" cx="1.500" r="1.300" fill="#c8c8c8"/></svg>
<div style="left:1741.5px;top:561px;width:120.5px;height:28px;background:#2d3032;border:1px solid #cfcfcf;"></div>
<span id="t129" class="t" style="left:1742.78px;top:570.40px;font-size:12px;line-height:12px;color:#f0f0f0;transform:scaleX(0.9418);">SVideo</span>
<div class="b" style="left:1811px;top:564.3px;width:22px;height:21.5px;background:#3b4049;border-radius:4px;overflow:hidden;"><svg width="22" height="21.5" viewBox="0 0 22 21.5"><path d="M5.500 17.500h11" stroke="#d6d6d6" stroke-width="1.800"/></svg></div>
<div class="b" style="left:1836.3px;top:564.3px;width:22px;height:21.5px;background:#3b4049;border-radius:4px;overflow:hidden;"><svg width="22" height="21.5" viewBox="0 0 22 21.5"><rect x="3.500" y="8.500" width="9.500" height="9.500" fill="none" stroke="#d6d6d6" stroke-width="1.200"/><path d="M8 6V4.500h8" fill="none" stroke="#d6d6d6" stroke-width="1.200"/><path d="M15 2.200l3.500 2.300-3.500 2.300z" fill="#d6d6d6"/></svg></div>
<div style="left:1741.5px;top:589px;width:121px;height:442px;border-left:1px solid #343941;border-right:1px solid #343941;"></div>
<div class="b" style="left:1769px;top:1007.3px;width:28px;height:15.5px;background:#3a3f48;border-radius:2px;overflow:hidden;"><svg width="28" height="15.5" viewBox="0 0 28 15.5"><path d="M17.500 3v9.500l-9.500-4.750zM20 3v9.500" fill="#d6d6d6" stroke="#d6d6d6" stroke-width="1.300"/></svg></div>
<div class="b" style="left:1805.5px;top:1007.3px;width:28px;height:15.5px;background:#3a3f48;border-radius:2px;overflow:hidden;"><svg width="28" height="15.5" viewBox="0 0 28 15.5"><path d="M10.500 3v9.500l9.500-4.750zM8 3v9.500" fill="#d6d6d6" stroke="#d6d6d6" stroke-width="1.300"/></svg></div>
<div style="left:1871px;top:83px;width:1px;height:948px;background:#2c3139;"></div>
<div style="left:1876.5px;top:88.5px;width:37px;height:36.5px;background:#2a2e36;border:1px solid #c4c4c4;"></div>
<div class="b" style="left:1880px;top:92px;width:30px;height:30px;background:#3d424b;border-radius:1px;overflow:hidden;"><svg width="30" height="30" viewBox="0 0 30 30"><rect x="4.500" y="4.500" width="21" height="21" fill="#2a2e36" stroke="#d6d6d6" stroke-width="1.300"/><circle cx="10.500" cy="10.500" r="3" fill="#8c8f8e"/><circle cx="19.500" cy="15.500" r="2.800" fill="#8c8f8e"/><path d="M5.500 25v-6l3.500-3 2.500 3.500 4-8.500 4 7.500 2.500-2 2.500 4v4.500z" fill="#d6d6d6"/></svg></div>
</body></html>
